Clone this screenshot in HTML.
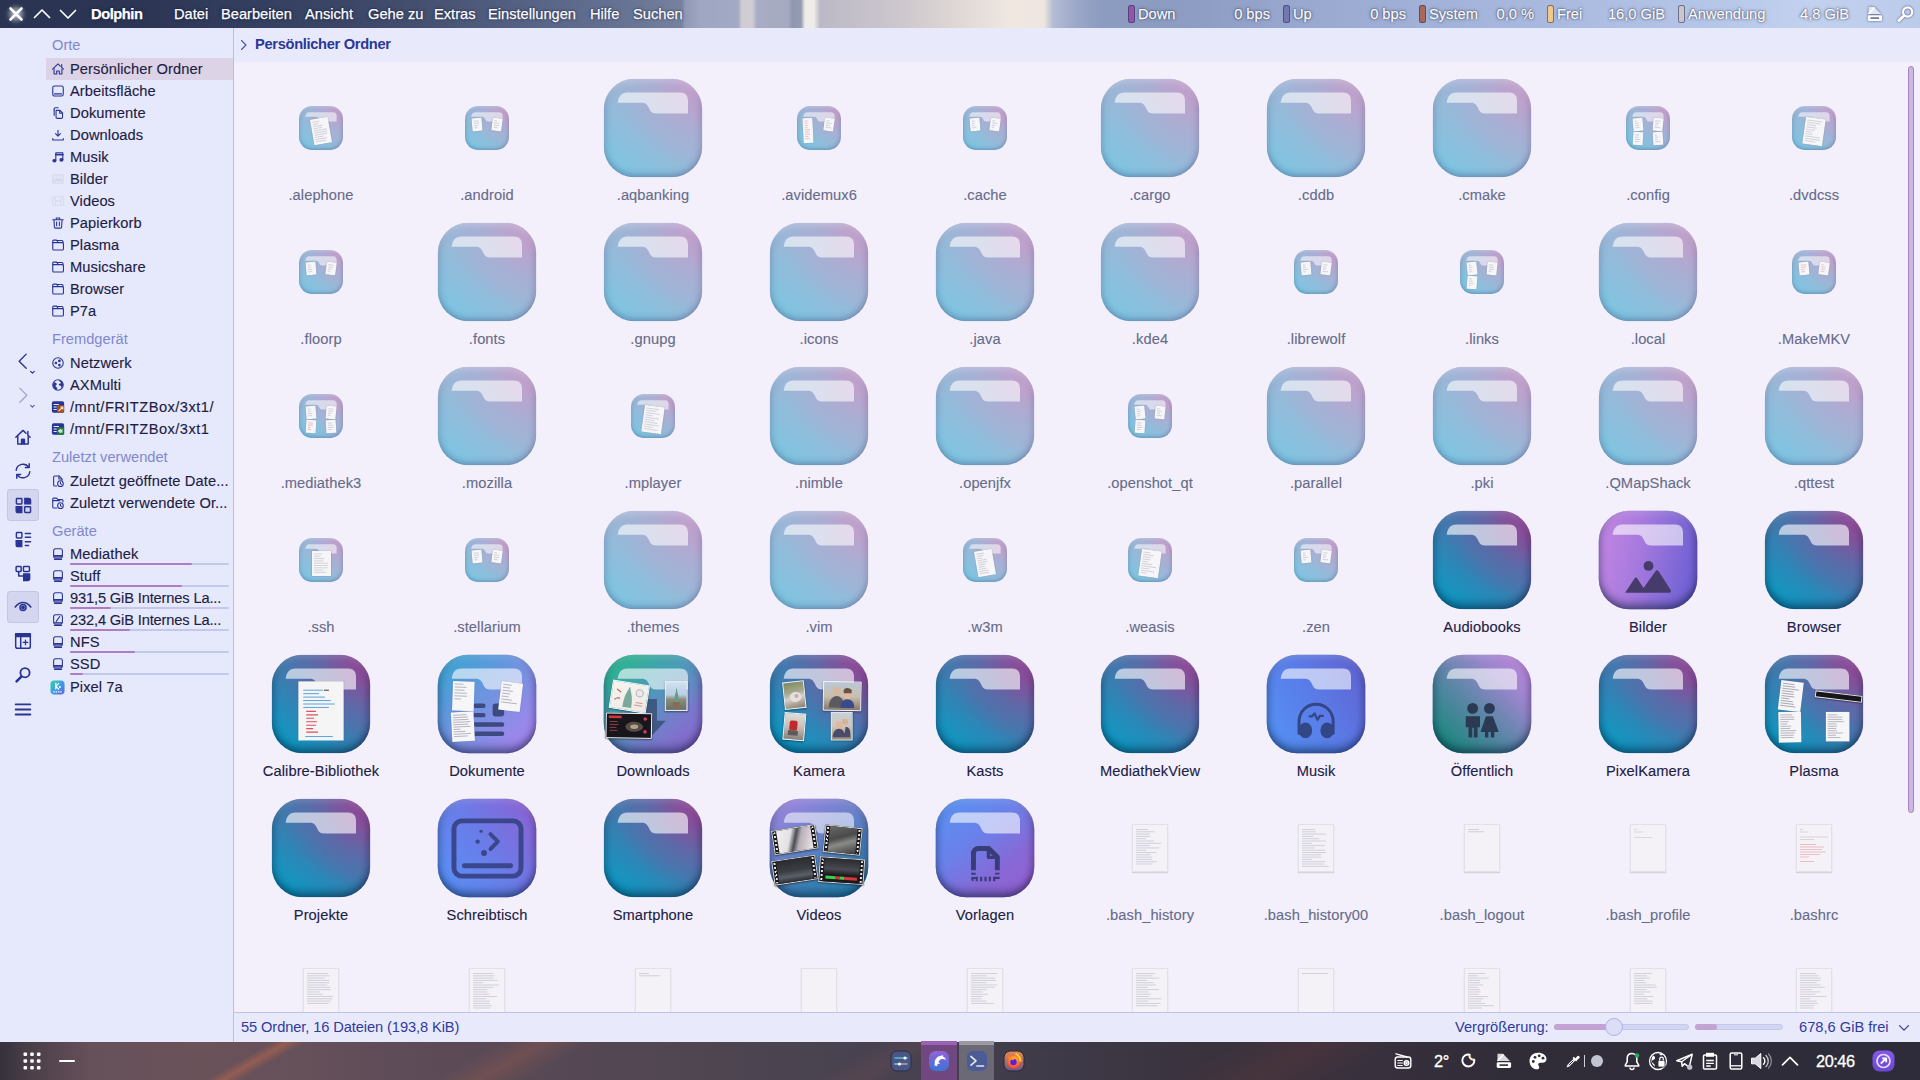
<!DOCTYPE html>
<html lang="de"><head><meta charset="utf-8"><title>Persönlicher Ordner — Dolphin</title>
<style>
*{box-sizing:border-box;margin:0;padding:0}
html,body{width:1920px;height:1080px;overflow:hidden;background:#f3f0fb}
body{font-family:"Liberation Sans",sans-serif;font-size:14.67px;color:#1c2044;position:relative;line-height:18px}
.abs,.abs>*{position:absolute}
#top{position:absolute;left:0;top:0;width:1920px;height:28px;color:#fff;
 background:linear-gradient(90deg,#2a3352 0,#2c3554 140px,#343e5e 250px,#3c4768 350px,#455070 420px,#525e80 500px,#5f6b8d 578px,#6a7694 640px,#76829f 682px,#8f98b4 685px,#9ea6c2 700px,#a4aac4 738px,#cfccd4 742px,#d2ced4 752px,#a8acc4 757px,#a6aac0 788px,#9098b0 792px,#949cb4 801px,#efebe8 805px,#efebe8 814px,#bcb9c7 820px,#cdc7cd 900px,#e0d8d6 960px,#efe7e0 1010px,#eee6e0 1044px,#b4bcd4 1053px,#9ba8c8 1076px,#8c9cc0 1100px,#8d9dc3 1200px,#98a8ce 1300px,#a6b6dc 1500px,#b5c5e7 1700px,#c1d1ee 1810px,#bccbea 1920px);
 text-shadow:0 0 1px rgba(15,22,62,.85),0 0 2px rgba(15,22,62,.7),0 0 4px rgba(20,28,70,.3);-webkit-text-stroke:.25px #fff}
#top span{position:absolute;top:5px;white-space:nowrap}
#top .r{text-align:right}
#top i{position:absolute;top:5px;width:7px;height:18px;border-radius:2.500px;border:1px solid rgba(50,55,95,.6)}
#side{position:absolute;left:0;top:28px;width:234px;height:1014px;background:#e6e8fb;border-right:1px solid #b9c0e8}
#side .hd{position:absolute;left:52px;color:#8088cf;white-space:nowrap}
#side .it{position:absolute;left:46px;width:187px;height:22px;white-space:nowrap}
#side .it span{position:absolute;left:24px;top:2px;letter-spacing:.08px;-webkit-text-stroke:.12px}
#side .it svg{position:absolute;left:5px;top:4px;width:14px;height:14px}
#side .sel{background:#dcd4e6}
#side .bar{position:absolute;left:24px;top:20px;width:159px;height:2px;background:#c3c7ec;border-radius:1px}
#side .bar b{position:absolute;left:0;top:0;height:2px;background:#b07cc6;border-radius:1px}
.tb{position:absolute;left:7px;width:32px;height:32px}
.tb.on{background:#d3d6ee;border:1px solid #c2c6e6;border-radius:3px}
.tb svg{position:absolute;left:5px;top:5px;width:22px;height:22px;overflow:visible}
.tb.on svg{left:4px;top:4px}
#loc{position:absolute;left:234px;top:28px;width:1686px;height:34px;background:#e8eafc}
#view{position:absolute;left:234px;top:62px;width:1686px;height:950px;background:#f3f0fb;overflow:hidden}
#view .in{position:absolute;left:-234px;top:-62px;width:1920px;height:1080px}
.lb{position:absolute;width:166px;text-align:center;white-space:nowrap;color:#1c2044;letter-spacing:.08px;-webkit-text-stroke:.12px}
.lb.h{color:#676b8a}
#status{position:absolute;left:234px;top:1012px;width:1686px;height:30px;background:#e8eafc;border-top:1px solid #bcc4ea;color:#2f3a9e}
#panel{position:absolute;left:0;top:1042px;width:1920px;height:38px;color:#fff;
 background:linear-gradient(150deg,rgba(190,105,75,0) 136px,rgba(190,105,75,.5) 144px,rgba(190,105,75,0) 153px,rgba(170,95,75,0) 250px,rgba(170,95,75,.28) 272px,rgba(170,95,75,0) 296px,rgba(150,90,80,0) 440px,rgba(150,90,80,.15) 462px,rgba(150,90,80,0) 480px,rgba(120,60,60,0) 620px,rgba(120,60,60,.22) 660px,rgba(120,60,60,0) 700px),linear-gradient(90deg,#36313d 0,#4a3f48 30px,#66505a 90px,#6a5259 200px,#66505a 300px,#5e4c58 400px,#584955 520px,#524753 640px,#4c4450 760px,#474150 900px,#3f3a48 1050px,#3a333e 1200px,#38303c 1380px,#302c38 1500px,#2e2c3a 1920px)}
/* folder icons */
.F{position:absolute;width:100px;height:100px;border-radius:31px;transform:scale(.986)}
.F:after{content:"";position:absolute;inset:0;border-radius:31px}
.F .tab{position:absolute;left:0;top:0;width:100px;height:100px}
.S{position:absolute;width:44px;height:44px;border-radius:13px}
.S .tab{position:absolute;left:0;top:0;width:44px;height:44px}
.fh{background:radial-gradient(circle at 96% 8%,#c4a0cc 0,rgba(192,160,204,.85) 14%,rgba(184,165,207,.4) 36%,rgba(175,170,210,0) 62%),linear-gradient(38deg,#7cc6e2 8%,#99b8d8 50%,#a8b1d4 95%);box-shadow:inset 0 -6px 7px -3px rgba(60,70,120,.35),inset 0 5px 6px -3px rgba(255,255,255,.35),inset 6px 0 7px -4px rgba(70,80,130,.25),inset -6px 0 7px -4px rgba(90,70,120,.25)}
.sh{background:radial-gradient(circle at 96% 8%,#c4a0cc 0,rgba(192,160,204,.85) 14%,rgba(184,165,207,.4) 36%,rgba(175,170,210,0) 62%),linear-gradient(38deg,#7cc6e2 8%,#99b8d8 50%,#a8b1d4 95%);box-shadow:inset 0 -3px 4px -2px rgba(60,70,120,.35),inset 0 3px 3px -2px rgba(255,255,255,.35),inset 3px 0 4px -2px rgba(70,80,130,.2),inset -3px 0 4px -2px rgba(90,70,120,.2)}
.fn{background:radial-gradient(circle at 96% 8%,#92489a 0,rgba(142,74,152,.85) 14%,rgba(125,85,158,.4) 36%,rgba(110,100,165,0) 62%),linear-gradient(38deg,#0a9cc4 8%,#3f7bb0 50%,#5a6eab 95%)}
.sd{box-shadow:inset 0 -8px 9px -3px rgba(5,25,55,.5),inset 0 5px 7px -3px rgba(255,255,255,.22),inset 6px 0 8px -4px rgba(10,30,70,.3),inset -6px 0 8px -4px rgba(40,10,60,.3)}
.pp{position:absolute;background:#f6f5f7;box-shadow:0 0 1px rgba(0,0,0,.35)}
.doc{position:absolute;width:36px;height:48px;background:#f4f2f7;border:1px solid #e2e0e9;box-shadow:0 1px 1px rgba(60,60,90,.16)}
</style></head><body>

<div id="top">
<svg style="position:absolute;left:4px;top:2px;width:24px;height:24px;overflow:visible" viewBox="0 0 24 24"><defs><filter id="glow" x="-80%" y="-80%" width="260%" height="260%"><feGaussianBlur stdDeviation="2.6"/></filter></defs><circle cx="12" cy="12" r="7" fill="#fff" opacity=".55" filter="url(#glow)"/><path d="M6.5 6.5l11 11M17.5 6.5l-11 11" stroke="#fff" stroke-width="2.6" stroke-linecap="round" fill="none"/></svg>
<svg style="position:absolute;left:30px;top:2px;width:24px;height:24px" viewBox="0 0 24 24"><path d="M4.5 15.5L12 8l7.5 7.5" stroke="#fff" stroke-width="1.7" fill="none" stroke-linecap="round" stroke-linejoin="round"/></svg>
<svg style="position:absolute;left:56px;top:2px;width:24px;height:24px" viewBox="0 0 24 24"><path d="M4.5 8.5L12 16l7.5-7.5" stroke="#fff" stroke-width="1.7" fill="none" stroke-linecap="round" stroke-linejoin="round"/></svg>
<span style="left:91px;font-weight:bold;letter-spacing:-.45px">Dolphin</span>
<span style="left:174px">Datei</span><span style="left:221px">Bearbeiten</span><span style="left:305px">Ansicht</span><span style="left:368px">Gehe zu</span><span style="left:434px">Extras</span><span style="left:488px">Einstellungen</span><span style="left:590px">Hilfe</span><span style="left:633px">Suchen</span>
<i style="left:1128px;background:#9256a8"></i><span style="left:1138px">Down</span><span class="r" style="right:650px">0 bps</span>
<i style="left:1283px;background:#7478b2"></i><span style="left:1293px">Up</span><span class="r" style="right:514px">0 bps</span>
<i style="left:1419px;background:#a9695a"></i><span style="left:1429px">System</span><span class="r" style="right:386px">0,0 %</span>
<i style="left:1547px;background:#f1c98a"></i><span style="left:1557px">Frei</span><span class="r" style="right:255px">16,0 GiB</span>
<i style="left:1678px;background:#cbc6ca"></i><span style="left:1688px">Anwendung</span><span class="r" style="right:71px">4,8 GiB</span>
<svg style="position:absolute;left:1866px;top:5px;width:18px;height:18px;filter:drop-shadow(0 0 1px rgba(20,28,70,.7))" viewBox="0 0 18 18"><path d="M2.500 1.700H8L15 9H2.500z" fill="#e4e6ee"/><path d="M2.500 9L8.500 2.500" stroke="#fff" stroke-width="1.400"/><rect x="1.700" y="10.300" width="14.400" height="5.600" rx="1.300" fill="#fff"/><path d="M4.500 13.100h8.500" stroke="#6a7698" stroke-width="1.700"/></svg>
<svg style="position:absolute;left:1896px;top:5px;width:19px;height:19px;filter:drop-shadow(0 0 1px rgba(20,28,70,.7))" viewBox="0 0 19 19"><circle cx="11.6" cy="7" r="4.6" fill="none" stroke="#fff" stroke-width="2.2"/><path d="M8 10.6l-5 5" stroke="#fff" stroke-width="2.8" stroke-linecap="round"/></svg>
</div>

<div id="side">
<div class="hd" style="top:8px">Orte</div>
<div class="it sel" style="top:30px"><svg viewBox="0 0 16 16" fill="none" stroke="#2a3494" stroke-width="1.25" stroke-linecap="round" stroke-linejoin="round"><path d="M1.8 8.2L8 2.2l2.6 2.5M12.2 3v3.2l2 2"/><path d="M3.5 7.5v6.3h3v-3.6h3v3.6h3V8"/></svg><span>Persönlicher Ordner</span></div>
<div class="it" style="top:52px"><svg viewBox="0 0 16 16" fill="none" stroke="#2a3494" stroke-width="1.25" stroke-linecap="round" stroke-linejoin="round"><rect x="2" y="2.2" width="12" height="11.6" rx="2"/><path d="M4 11.3h8"/></svg><span>Arbeitsfläche</span></div>
<div class="it" style="top:74px"><svg viewBox="0 0 16 16" fill="none" stroke="#2a3494" stroke-width="1.25" stroke-linecap="round" stroke-linejoin="round"><path d="M3.6 4.5V3.3a1.3 1.3 0 011.3-1.3h3.2"/><path d="M5.8 5h4.4l3 3v4.8a1.3 1.3 0 01-1.3 1.3H7.1a1.3 1.3 0 01-1.3-1.3z"/><path d="M3.6 4.5v6.2M9.9 5.2v3h3"/></svg><span>Dokumente</span></div>
<div class="it" style="top:96px"><svg viewBox="0 0 16 16" fill="none" stroke="#2a3494" stroke-width="1.25" stroke-linecap="round" stroke-linejoin="round"><path d="M8 2.500v6.500M5.200 6.500L8 9.300l2.800-2.800M2 12v1.800h12V12"/></svg><span>Downloads</span></div>
<div class="it" style="top:118px"><svg viewBox="0 0 16 16" fill="none" stroke="#2a3494" stroke-width="1.25" stroke-linecap="round" stroke-linejoin="round"><path d="M5.5 12V3.2h8V11"/><path d="M5.5 5.2h8" stroke-width="2"/><ellipse cx="3.9" cy="12.3" rx="1.7" ry="1.4" fill="#2a3494"/><ellipse cx="11.9" cy="11.3" rx="1.7" ry="1.4" fill="#2a3494"/></svg><span>Musik</span></div>
<div class="it" style="top:140px"><svg viewBox="0 0 16 16" fill="none" stroke="#d9dcef" stroke-width="1.5"><rect x="1.8" y="3" width="12.4" height="10" rx="1.5" fill="#e0e3f4"/><path d="M3.5 11l3-3 2 2 2-1.6 2 2.6" stroke="#cfd3ea"/></svg><span>Bilder</span></div>
<div class="it" style="top:162px"><svg viewBox="0 0 16 16" fill="none" stroke="#d9dcef" stroke-width="1.5"><rect x="1.8" y="3" width="12.4" height="10" rx="1.5"/><path d="M4.8 3v10M11.2 3v10M4.8 8h6.4"/></svg><span>Videos</span></div>
<div class="it" style="top:184px"><svg viewBox="0 0 16 16" fill="none" stroke="#2a3494" stroke-width="1.25" stroke-linecap="round" stroke-linejoin="round"><path d="M2 4.2h12M6 4V2.3h4V4M3.4 4.4l.5 8.4a1.2 1.2 0 001.2 1.1h5.800a1.2 1.2 0 001.2-1.1l.5-8.4M6.400 6.800v4.400M9.600 6.800v4.400"/></svg><span>Papierkorb</span></div>
<div class="it" style="top:206px"><svg viewBox="0 0 16 16" fill="none" stroke="#2a3494" stroke-width="1.25" stroke-linecap="round" stroke-linejoin="round"><path d="M2 5.3V3.4a1 1 0 011-1h3.3l1.5 1.7"/><path d="M2 5.3h11a1.2 1.2 0 011.2 1.2v6a1.2 1.2 0 01-1.2 1.2H3.2A1.2 1.2 0 012 12.500z"/><path d="M6.5 2.9h6a1.2 1.2 0 011.2 1.2v1.2" /></svg><span>Plasma</span></div>
<div class="it" style="top:228px"><svg viewBox="0 0 16 16" fill="none" stroke="#2a3494" stroke-width="1.25" stroke-linecap="round" stroke-linejoin="round"><path d="M2 5.3V3.4a1 1 0 011-1h3.3l1.5 1.7"/><path d="M2 5.3h11a1.2 1.2 0 011.2 1.2v6a1.2 1.2 0 01-1.2 1.2H3.2A1.2 1.2 0 012 12.500z"/><path d="M6.5 2.9h6a1.2 1.2 0 011.2 1.2v1.2" /></svg><span>Musicshare</span></div>
<div class="it" style="top:250px"><svg viewBox="0 0 16 16" fill="none" stroke="#2a3494" stroke-width="1.25" stroke-linecap="round" stroke-linejoin="round"><path d="M2 5.3V3.4a1 1 0 011-1h3.3l1.5 1.7"/><path d="M2 5.3h11a1.2 1.2 0 011.2 1.2v6a1.2 1.2 0 01-1.2 1.2H3.2A1.2 1.2 0 012 12.500z"/><path d="M6.5 2.9h6a1.2 1.2 0 011.2 1.2v1.2" /></svg><span>Browser</span></div>
<div class="it" style="top:272px"><svg viewBox="0 0 16 16" fill="none" stroke="#2a3494" stroke-width="1.25" stroke-linecap="round" stroke-linejoin="round"><path d="M2 5.3V3.4a1 1 0 011-1h3.3l1.5 1.7"/><path d="M2 5.3h11a1.2 1.2 0 011.2 1.2v6a1.2 1.2 0 01-1.2 1.2H3.2A1.2 1.2 0 012 12.500z"/><path d="M6.5 2.9h6a1.2 1.2 0 011.2 1.2v1.2" /></svg><span>P7a</span></div>
<div class="hd" style="top:302px">Fremdgerät</div>
<div class="it" style="top:324px"><svg viewBox="0 0 16 16" fill="none" stroke="#2a3494" stroke-width="1.25" stroke-linecap="round" stroke-linejoin="round"><circle cx="8" cy="8" r="6"/><circle cx="5.6" cy="8" r=".9" fill="#2a3494"/><circle cx="9.6" cy="5.6" r=".9" fill="#2a3494"/><circle cx="9.6" cy="10.4" r=".9" fill="#2a3494"/></svg><span>Netzwerk</span></div>
<div class="it" style="top:346px"><svg viewBox="0 0 16 16" fill="none" stroke="#2a3494" stroke-width="1.25" stroke-linecap="round" stroke-linejoin="round"><circle cx="8" cy="8" r="6"/><path d="M3.200 5.200c1.400-.3 2.900.2 3.300 1.300.4 1.200-.9 1.500-1.300 2.400-.3.800.6 1.300 1.300 1.800.8.600.700 1.700.300 2.800C4.500 13 2.500 11 2.300 8.300c0-1.200.3-2.200.900-3.100zM9.300 2.300c-.2.900.2 1.600 1.100 1.900.9.300 1.300 1.100.700 1.800-.600.600-1.500.300-2 1-.400.700.200 1.500 1.100 1.600 1 .100 1.600.800 1.500 1.800l-.3 1.200c1.500-1 2.400-2.700 2.300-4.500-.1-2.600-2-4.500-4.400-4.800z" fill="#2a3494" stroke="none"/></svg><span>AXMulti</span></div>
<div class="it" style="top:368px"><svg viewBox="0 0 16 16"><rect x="1" y="1.500" width="14" height="13" rx="2" fill="#2a3494"/><path d="M3 5.200h6M3 8h3.500M3 10.800h3.500" stroke="#e6e8fb" stroke-width="1.300"/><rect x="7" y="6" width="8" height="8.500" fill="#a8501c"/><path d="M8.700 12.800l4.600-4.600M10.700 8h2.800v2.800" stroke="#f6e2c4" stroke-width="1.300" fill="none"/></svg><span style="letter-spacing:.46px">/mnt/FRITZBox/3xt1/</span></div>
<div class="it" style="top:390px"><svg viewBox="0 0 16 16"><rect x="1" y="1.500" width="14" height="13" rx="2" fill="#2a3494"/><path d="M3 5.200h6M3 8h3.500M3 10.800h3.500" stroke="#e6e8fb" stroke-width="1.300"/><rect x="7" y="6" width="8" height="8.500" fill="#1c7d36"/><path d="M8.200 10.300h2v-1.900l1.600.8h1.700M8.200 10.300h2v1.900l1.600-.8h1.700M11.800 9.200v2.200" fill="#eefaee" stroke="#eefaee" stroke-width="1"/></svg><span style="letter-spacing:.46px">/mnt/FRITZBox/3xt1</span></div>
<div class="hd" style="top:420px">Zuletzt verwendet</div>
<div class="it" style="top:442px"><svg viewBox="0 0 16 16" fill="none" stroke="#2a3494" stroke-width="1.25" stroke-linecap="round" stroke-linejoin="round"><path d="M6.500 13.800H4.300A1.300 1.300 0 013 12.500v-9a1.300 1.300 0 011.300-1.300h4.900L12.600 5.600v1.400"/><path d="M9 2.400v3.400h3.400"/><circle cx="10.800" cy="11" r="3.200"/><path d="M10.800 9.500V11l1 .9" stroke-width="1.200"/></svg><span style="letter-spacing:.1px">Zuletzt geöffnete Date...</span></div>
<div class="it" style="top:464px"><svg viewBox="0 0 16 16" fill="none" stroke="#2a3494" stroke-width="1.25" stroke-linecap="round" stroke-linejoin="round"><path d="M2 5.300V3.400a1 1 0 011-1h3.300l1.500 1.700h4.700a1.200 1.200 0 011.200 1.200v1.400"/><path d="M6.500 13.700H3.200A1.200 1.200 0 012 12.500V5.300h8"/><circle cx="10.800" cy="11" r="3.200"/><path d="M10.800 9.500V11l1 .9" stroke-width="1.200"/></svg><span>Zuletzt verwendete Or...</span></div>
<div class="hd" style="top:494px">Geräte</div>
<div class="it" style="top:515px"><svg viewBox="0 0 16 16" fill="none" stroke="#2a3494" stroke-width="1.25" stroke-linecap="round" stroke-linejoin="round"><rect x="3" y="2" width="10" height="10.500" rx="2"/><path d="M3.300 9.800h9.400" /><path d="M4 14h8" stroke-width="1.600"/><path d="M3.400 10.500h9.200v1.200H3.400z" fill="#2a3494" stroke="none"/></svg><span>Mediathek</span><div class="bar"><b style="width:122px"></b></div></div>
<div class="it" style="top:537px"><svg viewBox="0 0 16 16" fill="none" stroke="#2a3494" stroke-width="1.25" stroke-linecap="round" stroke-linejoin="round"><rect x="3" y="2" width="10" height="10.500" rx="2"/><path d="M3.300 9.800h9.400" /><path d="M4 14h8" stroke-width="1.600"/><path d="M3.400 10.500h9.200v1.200H3.400z" fill="#2a3494" stroke="none"/></svg><span>Stuff</span><div class="bar"><b style="width:112px"></b></div></div>
<div class="it" style="top:559px"><svg viewBox="0 0 16 16" fill="none" stroke="#2a3494" stroke-width="1.25" stroke-linecap="round" stroke-linejoin="round"><rect x="3" y="2" width="10" height="10.500" rx="2"/><path d="M3.300 9.800h9.400" /><path d="M4 14h8" stroke-width="1.600"/><path d="M3.400 10.500h9.200v1.200H3.400z" fill="#2a3494" stroke="none"/></svg><span style="letter-spacing:-.15px">931,5 GiB Internes La...</span><div class="bar"><b style="width:41px"></b></div></div>
<div class="it" style="top:581px"><svg viewBox="0 0 16 16" fill="none" stroke="#2a3494" stroke-width="1.25" stroke-linecap="round" stroke-linejoin="round"><rect x="3" y="2" width="10" height="10.500" rx="2"/><path d="M6 9.500l4-5.500" stroke-width="1.300"/><path d="M4 14h8" stroke-width="1.600"/><path d="M3.400 10.500h9.200v1.200H3.400z" fill="#2a3494" stroke="none"/></svg><span style="letter-spacing:-.15px">232,4 GiB Internes La...</span><div class="bar"><b style="width:60px"></b></div></div>
<div class="it" style="top:603px"><svg viewBox="0 0 16 16" fill="none" stroke="#2a3494" stroke-width="1.25" stroke-linecap="round" stroke-linejoin="round"><rect x="3" y="2" width="10" height="10.500" rx="2"/><path d="M3.300 9.800h9.400" /><path d="M4 14h8" stroke-width="1.600"/><path d="M3.400 10.500h9.200v1.200H3.400z" fill="#2a3494" stroke="none"/></svg><span>NFS</span><div class="bar"><b style="width:65px"></b></div></div>
<div class="it" style="top:625px"><svg viewBox="0 0 16 16" fill="none" stroke="#2a3494" stroke-width="1.25" stroke-linecap="round" stroke-linejoin="round"><rect x="3" y="2" width="10" height="10.500" rx="2"/><path d="M3.300 9.800h9.400" /><path d="M4 14h8" stroke-width="1.600"/><path d="M3.400 10.500h9.200v1.200H3.400z" fill="#2a3494" stroke="none"/></svg><span>SSD</span><div class="bar"><b style="width:13px"></b></div></div>
<div class="it" style="top:648px"><svg viewBox="0 0 16 16" style="left:4px;top:4px;width:15px;height:15px"><defs><linearGradient id="kdg" x1="0" y1="0" x2="1" y2="1"><stop offset="0" stop-color="#3fd0a0"/><stop offset=".5" stop-color="#3aa0e8"/><stop offset="1" stop-color="#6a5ae0"/></linearGradient></defs><rect x=".5" y=".5" width="15" height="15" rx="4" fill="url(#kdg)"/><path d="M6.200 3v7M6.200 7l3.300-3.600M6.200 6.800l3.600 3.400" stroke="#fff" stroke-width="1.300" fill="none"/><circle cx="10.500" cy="7.500" r="1.100" fill="#fff"/><path d="M3.500 12.700h9" stroke="#fff" stroke-width="1.300" stroke-dasharray="1.500 1"/></svg><span>Pixel 7a</span></div>
<div class="tb " style="top:317px"><svg viewBox="0 0 24 24" fill="none" stroke="#2a3494" stroke-width="1.6" stroke-linecap="round" stroke-linejoin="round"><path d="M15.500 4.500L7.800 12.200l7.700 7.700" stroke-width="1.500"/><path d="M20.300 23.300l2 2 2-2" stroke-width="1.300"/></svg></div>
<div class="tb " style="top:351px"><svg viewBox="0 0 24 24" fill="none" stroke="#a3a7d0" stroke-width="1.6" stroke-linecap="round" stroke-linejoin="round"><path d="M8.500 4.500l7.700 7.700-7.700 7.700" stroke-width="1.500"/><path d="M20.300 23.300l2 2 2-2" stroke-width="1.300" stroke="#5a64b4"/></svg></div>
<div class="tb " style="top:393px"><svg viewBox="0 0 24 24" fill="none" stroke="#2a3494" stroke-width="1.6" stroke-linecap="round" stroke-linejoin="round"><path d="M4.200 12.300L12 4.800l3.300 3.200M17.300 6v4l2.500 2.300"/><path d="M6.300 11v8.700h4.200v-5h3v5h4.200V11.500"/><path d="M10.500 14.700h3v5h-3z" fill="#2a3494"/></svg></div>
<div class="tb " style="top:427px"><svg viewBox="0 0 24 24" fill="none" stroke="#2a3494" stroke-width="1.6" stroke-linecap="round" stroke-linejoin="round"><path d="M4.600 11.200A7.500 7.500 0 0118.200 7.800M19.400 12.800A7.500 7.500 0 015.800 16.200"/><path d="M18.800 4v4.200h-4.200M5.200 20v-4.200h4.200"/></svg></div>
<div class="tb on" style="top:461px"><svg viewBox="0 0 24 24" fill="none" stroke="#2a3494" stroke-width="1.6" stroke-linecap="round" stroke-linejoin="round"><rect x="4.800" y="4.800" width="6" height="6" rx=".8"/><path d="M13.200 4h5a2.800 2.800 0 012.800 2.800v4.600h-7.800z" fill="#2a3494" stroke="none"/><path d="M3.800 13.200h7.600V21H6.600a2.800 2.800 0 01-2.800-2.800z" fill="#2a3494" stroke="none"/><rect x="13.800" y="13.800" width="6.400" height="6.400" rx=".8"/></svg></div>
<div class="tb " style="top:495px"><svg viewBox="0 0 24 24" fill="none" stroke="#2a3494" stroke-width="1.6" stroke-linecap="round" stroke-linejoin="round"><rect x="4.800" y="4.800" width="6" height="6" rx=".8"/><path d="M3.800 13.200h7.600V21H6.600a2.800 2.800 0 01-2.800-2.800z" fill="#2a3494" stroke="none"/><path d="M14.500 6h5.700M14.500 10h5.700M14.500 15h5.700M14.500 19h3.500"/></svg></div>
<div class="tb " style="top:529px"><svg viewBox="0 0 24 24" fill="none" stroke="#2a3494" stroke-width="1.6" stroke-linecap="round" stroke-linejoin="round"><rect x="4.500" y="4.800" width="5.500" height="5.500" rx=".8"/><rect x="12.500" y="4.800" width="6.500" height="5.500" rx=".8"/><path d="M7.300 10.500v4.700h4.700"/><path d="M12 12.200h8V18a3 3 0 01-3 3h-5z" fill="#2a3494" stroke="none"/></svg></div>
<div class="tb on" style="top:563px"><svg viewBox="0 0 24 24" fill="none" stroke="#2a3494" stroke-width="1.6" stroke-linecap="round" stroke-linejoin="round"><path d="M3.500 12c2.300-3.300 5.200-5 8.500-5s6.200 1.700 8.500 5" stroke-width="1.700"/><circle cx="12" cy="12.500" r="3.300"/><circle cx="12" cy="12.500" r="1.300" fill="#2a3494"/></svg></div>
<div class="tb " style="top:597px"><svg viewBox="0 0 24 24" fill="none" stroke="#2a3494" stroke-width="1.6" stroke-linecap="round" stroke-linejoin="round"><path d="M4 4h16v3H4z" fill="#2a3494"/><rect x="4" y="4" width="16" height="16" rx="2"/><path d="M9.500 7v13"/><path d="M14.700 11v5M12.200 13.500h5" stroke-width="1.400"/></svg></div>
<div class="tb " style="top:631px"><svg viewBox="0 0 24 24" fill="none" stroke="#2a3494" stroke-width="1.6" stroke-linecap="round" stroke-linejoin="round"><circle cx="14.200" cy="9.500" r="5" stroke-width="2"/><path d="M10.200 13.700L5 19" stroke-width="2.800"/></svg></div>
<div class="tb " style="top:665px"><svg viewBox="0 0 24 24" fill="none" stroke="#2a3494" stroke-width="1.6" stroke-linecap="round" stroke-linejoin="round"><path d="M4 7h16M4 12.500h16M4 18h16" stroke-width="2"/></svg></div>
</div>
<div id="loc"><svg style="position:absolute;left:5px;top:10px;width:10px;height:14px" viewBox="0 0 10 14"><path d="M2.500 2.500L7 7l-4.500 4.500" fill="none" stroke="#4a54ac" stroke-width="1.150" stroke-linecap="round" stroke-linejoin="round"/></svg><span style="position:absolute;left:21px;top:7px;font-weight:bold;color:#2c3796;letter-spacing:-.32px;white-space:nowrap">Persönlicher Ordner</span></div>
<div id="view"><div class="in">

<div class="S sh" style="left:299px;top:106px"><svg class="tab" viewBox="0 0 100 100"><path d="M14.200 24.300C15 18 18 14 24 14H77.500C82.500 14 85.500 17 85.500 22V35.300H53C48 35.300 47 32 45.500 29 44 26 42.500 24.300 38.500 24.300Z" fill="#fff" fill-opacity="0.55"/></svg><div class="pp" style="left:12.7px;top:12.2px;width:18px;height:26px;transform:rotate(-10deg);background:#f6f5f8"><svg style="position:absolute;left:0;top:0;width:18px;height:26px" viewBox="0 0 18 26"><path d="M2 3.0h7.2M2 5.2h6.0M2 7.4h9.6M2 9.6h8.6M2 11.8h13.0M2 14.0h13.1M2 16.2h12.7M2 18.4h8.7M2 20.6h11.4M2 22.8h10.5" stroke="#c4c4cf" stroke-width="0.7"/></svg></div></div>
<div class="lb h" style="left:238px;top:186px">.alephone</div>
<div class="S sh" style="left:465px;top:106px"><svg class="tab" viewBox="0 0 100 100"><path d="M14.200 24.300C15 18 18 14 24 14H77.500C82.500 14 85.500 17 85.500 22V35.300H53C48 35.300 47 32 45.500 29 44 26 42.500 24.300 38.500 24.300Z" fill="#fff" fill-opacity="0.55"/></svg><div class="pp" style="left:6.5px;top:12px;width:10px;height:13px;transform:rotate(-5deg);background:#f6f5f8"><svg style="position:absolute;left:0;top:0;width:10px;height:13px" viewBox="0 0 10 13"><path d="M2 3.0h5.0M2 5.2h5.1M2 7.4h4.3M2 9.6h3.2" stroke="#c4c4cf" stroke-width="0.7"/></svg></div><div class="pp" style="left:27px;top:12px;width:10px;height:13px;transform:rotate(7deg);background:#f6f5f8"><svg style="position:absolute;left:0;top:0;width:10px;height:13px" viewBox="0 0 10 13"><path d="M2 3.0h2.5M2 5.2h4.7M2 7.4h5.3M2 9.6h4.0" stroke="#c4c4cf" stroke-width="0.7"/></svg></div></div>
<div class="lb h" style="left:404px;top:186px">.android</div>
<div class="F fh" style="left:603px;top:78px;"><svg class="tab" viewBox="0 0 100 100"><path d="M14.200 24.300C15 18 18 14 24 14H77.500C82.500 14 85.500 17 85.500 22V35.300H53C48 35.300 47 32 45.500 29 44 26 42.500 24.300 38.500 24.300Z" fill="#fff" fill-opacity="0.6"/></svg></div>
<div class="lb h" style="left:570px;top:186px">.aqbanking</div>
<div class="S sh" style="left:797px;top:106px"><svg class="tab" viewBox="0 0 100 100"><path d="M14.200 24.300C15 18 18 14 24 14H77.500C82.500 14 85.500 17 85.500 22V35.300H53C48 35.300 47 32 45.500 29 44 26 42.500 24.300 38.500 24.300Z" fill="#fff" fill-opacity="0.55"/></svg><div class="pp" style="left:6px;top:12px;width:10px;height:25px;transform:rotate(-3deg);background:#f6f5f8"><svg style="position:absolute;left:0;top:0;width:10px;height:25px" viewBox="0 0 10 25"><path d="M2 3.0h3.4M2 5.2h2.7M2 7.4h3.2M2 9.6h2.6M2 11.8h5.2M2 14.0h4.2M2 16.2h4.7M2 18.4h3.3M2 20.6h4.2" stroke="#e3b0b6" stroke-width="0.7"/></svg></div><div class="pp" style="left:27px;top:12px;width:10px;height:13px;transform:rotate(8deg);background:#f6f5f8"><svg style="position:absolute;left:0;top:0;width:10px;height:13px" viewBox="0 0 10 13"><path d="M2 3.0h2.9M2 5.2h5.4M2 7.4h3.9M2 9.6h5.6" stroke="#c4c4cf" stroke-width="0.7"/></svg></div></div>
<div class="lb h" style="left:736px;top:186px">.avidemux6</div>
<div class="S sh" style="left:963px;top:106px"><svg class="tab" viewBox="0 0 100 100"><path d="M14.200 24.300C15 18 18 14 24 14H77.500C82.500 14 85.500 17 85.500 22V35.300H53C48 35.300 47 32 45.500 29 44 26 42.500 24.300 38.500 24.300Z" fill="#fff" fill-opacity="0.55"/></svg><div class="pp" style="left:6.5px;top:12px;width:10px;height:13px;transform:rotate(-5deg);background:#f6f5f8"><svg style="position:absolute;left:0;top:0;width:10px;height:13px" viewBox="0 0 10 13"><path d="M2 3.0h3.3M2 5.2h2.9M2 7.4h2.2M2 9.6h3.9" stroke="#c4c4cf" stroke-width="0.7"/></svg></div><div class="pp" style="left:27px;top:12px;width:10px;height:13px;transform:rotate(7deg);background:#f6f5f8"><svg style="position:absolute;left:0;top:0;width:10px;height:13px" viewBox="0 0 10 13"><path d="M2 3.0h2.5M2 5.2h5.3M2 7.4h3.4M2 9.6h2.4" stroke="#c4c4cf" stroke-width="0.7"/></svg></div></div>
<div class="lb h" style="left:902px;top:186px">.cache</div>
<div class="F fh" style="left:1100px;top:78px;"><svg class="tab" viewBox="0 0 100 100"><path d="M14.200 24.300C15 18 18 14 24 14H77.500C82.500 14 85.500 17 85.500 22V35.300H53C48 35.300 47 32 45.500 29 44 26 42.500 24.300 38.500 24.300Z" fill="#fff" fill-opacity="0.6"/></svg></div>
<div class="lb h" style="left:1067px;top:186px">.cargo</div>
<div class="F fh" style="left:1266px;top:78px;"><svg class="tab" viewBox="0 0 100 100"><path d="M14.200 24.300C15 18 18 14 24 14H77.500C82.500 14 85.500 17 85.500 22V35.300H53C48 35.300 47 32 45.500 29 44 26 42.500 24.300 38.500 24.300Z" fill="#fff" fill-opacity="0.6"/></svg></div>
<div class="lb h" style="left:1233px;top:186px">.cddb</div>
<div class="F fh" style="left:1432px;top:78px;"><svg class="tab" viewBox="0 0 100 100"><path d="M14.200 24.300C15 18 18 14 24 14H77.500C82.500 14 85.500 17 85.500 22V35.300H53C48 35.300 47 32 45.500 29 44 26 42.500 24.300 38.500 24.300Z" fill="#fff" fill-opacity="0.6"/></svg></div>
<div class="lb h" style="left:1399px;top:186px">.cmake</div>
<div class="S sh" style="left:1626px;top:106px"><svg class="tab" viewBox="0 0 100 100"><path d="M14.200 24.300C15 18 18 14 24 14H77.500C82.500 14 85.500 17 85.500 22V35.300H53C48 35.300 47 32 45.500 29 44 26 42.500 24.300 38.500 24.300Z" fill="#fff" fill-opacity="0.55"/></svg><div class="pp" style="left:6.5px;top:11.5px;width:10px;height:13px;transform:rotate(-5deg);background:#f6f5f8"><svg style="position:absolute;left:0;top:0;width:10px;height:13px" viewBox="0 0 10 13"><path d="M2 3.0h2.2M2 5.2h3.8M2 7.4h4.0M2 9.6h4.4" stroke="#c4c4cf" stroke-width="0.7"/></svg></div><div class="pp" style="left:6.5px;top:26px;width:10px;height:13px;transform:rotate(3deg);background:#f6f5f8"><svg style="position:absolute;left:0;top:0;width:10px;height:13px" viewBox="0 0 10 13"><path d="M2 3.0h3.8M2 5.2h3.4M2 7.4h5.3M2 9.6h4.7" stroke="#c4c4cf" stroke-width="0.7"/></svg></div><div class="pp" style="left:27px;top:11.5px;width:10px;height:13px;transform:rotate(5deg);background:#f6f5f8"><svg style="position:absolute;left:0;top:0;width:10px;height:13px" viewBox="0 0 10 13"><path d="M2 3.0h5.4M2 5.2h3.7M2 7.4h2.8M2 9.6h5.2" stroke="#c4c4cf" stroke-width="0.7"/></svg></div><div class="pp" style="left:27px;top:26px;width:10px;height:13px;transform:rotate(-3deg);background:#f6f5f8"><svg style="position:absolute;left:0;top:0;width:10px;height:13px" viewBox="0 0 10 13"><path d="M2 3.0h2.1M2 5.2h3.2M2 7.4h2.3M2 9.6h5.2" stroke="#c4c4cf" stroke-width="0.7"/></svg></div></div>
<div class="lb h" style="left:1565px;top:186px">.config</div>
<div class="S sh" style="left:1792px;top:106px"><svg class="tab" viewBox="0 0 100 100"><path d="M14.200 24.300C15 18 18 14 24 14H77.500C82.500 14 85.500 17 85.500 22V35.300H53C48 35.300 47 32 45.500 29 44 26 42.500 24.300 38.500 24.300Z" fill="#fff" fill-opacity="0.55"/></svg><div class="pp" style="left:12.2px;top:11.5px;width:20px;height:27px;transform:rotate(8deg);background:#f6f5f8"><svg style="position:absolute;left:0;top:0;width:20px;height:27px" viewBox="0 0 20 27"><path d="M2 3.0h14.4M2 5.3h13.1M2 7.6h9.2M2 9.9h10.2M2 12.2h8.8M2 14.5h6.7M2 16.8h6.7M2 19.1h14.6M2 21.4h15.0M2 23.7h10.9" stroke="#c4c4cf" stroke-width="0.7"/></svg></div></div>
<div class="lb h" style="left:1731px;top:186px">.dvdcss</div>
<div class="S sh" style="left:299px;top:250px"><svg class="tab" viewBox="0 0 100 100"><path d="M14.200 24.300C15 18 18 14 24 14H77.500C82.500 14 85.500 17 85.500 22V35.300H53C48 35.300 47 32 45.500 29 44 26 42.500 24.300 38.500 24.300Z" fill="#fff" fill-opacity="0.55"/></svg><div class="pp" style="left:6.5px;top:12px;width:10px;height:13px;transform:rotate(-5deg);background:#f6f5f8"><svg style="position:absolute;left:0;top:0;width:10px;height:13px" viewBox="0 0 10 13"><path d="M2 3.0h3.1M2 5.2h2.6M2 7.4h4.1M2 9.6h3.7" stroke="#c4c4cf" stroke-width="0.7"/></svg></div><div class="pp" style="left:27px;top:12px;width:10px;height:13px;transform:rotate(7deg);background:#f6f5f8"><svg style="position:absolute;left:0;top:0;width:10px;height:13px" viewBox="0 0 10 13"><path d="M2 3.0h5.2M2 5.2h5.0M2 7.4h3.6M2 9.6h2.3" stroke="#c4c4cf" stroke-width="0.7"/></svg></div></div>
<div class="lb h" style="left:238px;top:330px">.floorp</div>
<div class="F fh" style="left:437px;top:222px;"><svg class="tab" viewBox="0 0 100 100"><path d="M14.200 24.300C15 18 18 14 24 14H77.500C82.500 14 85.500 17 85.500 22V35.300H53C48 35.300 47 32 45.500 29 44 26 42.500 24.300 38.500 24.300Z" fill="#fff" fill-opacity="0.6"/></svg></div>
<div class="lb h" style="left:404px;top:330px">.fonts</div>
<div class="F fh" style="left:603px;top:222px;"><svg class="tab" viewBox="0 0 100 100"><path d="M14.200 24.300C15 18 18 14 24 14H77.500C82.500 14 85.500 17 85.500 22V35.300H53C48 35.300 47 32 45.500 29 44 26 42.500 24.300 38.500 24.300Z" fill="#fff" fill-opacity="0.6"/></svg></div>
<div class="lb h" style="left:570px;top:330px">.gnupg</div>
<div class="F fh" style="left:769px;top:222px;"><svg class="tab" viewBox="0 0 100 100"><path d="M14.200 24.300C15 18 18 14 24 14H77.500C82.500 14 85.500 17 85.500 22V35.300H53C48 35.300 47 32 45.500 29 44 26 42.500 24.300 38.500 24.300Z" fill="#fff" fill-opacity="0.6"/></svg></div>
<div class="lb h" style="left:736px;top:330px">.icons</div>
<div class="F fh" style="left:935px;top:222px;"><svg class="tab" viewBox="0 0 100 100"><path d="M14.200 24.300C15 18 18 14 24 14H77.500C82.500 14 85.500 17 85.500 22V35.300H53C48 35.300 47 32 45.500 29 44 26 42.500 24.300 38.500 24.300Z" fill="#fff" fill-opacity="0.6"/></svg></div>
<div class="lb h" style="left:902px;top:330px">.java</div>
<div class="F fh" style="left:1100px;top:222px;"><svg class="tab" viewBox="0 0 100 100"><path d="M14.200 24.300C15 18 18 14 24 14H77.500C82.500 14 85.500 17 85.500 22V35.300H53C48 35.300 47 32 45.500 29 44 26 42.500 24.300 38.500 24.300Z" fill="#fff" fill-opacity="0.6"/></svg></div>
<div class="lb h" style="left:1067px;top:330px">.kde4</div>
<div class="S sh" style="left:1294px;top:250px"><svg class="tab" viewBox="0 0 100 100"><path d="M14.200 24.300C15 18 18 14 24 14H77.500C82.500 14 85.500 17 85.500 22V35.300H53C48 35.300 47 32 45.500 29 44 26 42.500 24.300 38.500 24.300Z" fill="#fff" fill-opacity="0.55"/></svg><div class="pp" style="left:6.5px;top:12px;width:10px;height:13px;transform:rotate(-5deg);background:#f6f5f8"><svg style="position:absolute;left:0;top:0;width:10px;height:13px" viewBox="0 0 10 13"><path d="M2 3.0h2.9M2 5.2h3.0M2 7.4h5.2M2 9.6h2.4" stroke="#c4c4cf" stroke-width="0.7"/></svg></div><div class="pp" style="left:27px;top:12px;width:10px;height:13px;transform:rotate(7deg);background:#f6f5f8"><svg style="position:absolute;left:0;top:0;width:10px;height:13px" viewBox="0 0 10 13"><path d="M2 3.0h4.3M2 5.2h3.2M2 7.4h2.7M2 9.6h5.4" stroke="#c4c4cf" stroke-width="0.7"/></svg></div></div>
<div class="lb h" style="left:1233px;top:330px">.librewolf</div>
<div class="S sh" style="left:1460px;top:250px"><svg class="tab" viewBox="0 0 100 100"><path d="M14.200 24.300C15 18 18 14 24 14H77.500C82.500 14 85.500 17 85.500 22V35.300H53C48 35.300 47 32 45.500 29 44 26 42.500 24.300 38.500 24.300Z" fill="#fff" fill-opacity="0.55"/></svg><div class="pp" style="left:6.5px;top:11.5px;width:10px;height:13px;transform:rotate(-6deg);background:#f6f5f8"><svg style="position:absolute;left:0;top:0;width:10px;height:13px" viewBox="0 0 10 13"><path d="M2 3.0h2.4M2 5.2h3.5M2 7.4h2.5M2 9.6h2.9" stroke="#c4c4cf" stroke-width="0.7"/></svg></div><div class="pp" style="left:6.5px;top:26px;width:10px;height:13px;transform:rotate(4deg);background:#f6f5f8"><svg style="position:absolute;left:0;top:0;width:10px;height:13px" viewBox="0 0 10 13"><path d="M2 3.0h2.6M2 5.2h3.4M2 7.4h4.5M2 9.6h2.3" stroke="#c4c4cf" stroke-width="0.7"/></svg></div><div class="pp" style="left:27px;top:12px;width:10px;height:13px;transform:rotate(5deg);background:#f6f5f8"><svg style="position:absolute;left:0;top:0;width:10px;height:13px" viewBox="0 0 10 13"><path d="M2 3.0h4.3M2 5.2h4.8M2 7.4h5.0M2 9.6h2.5" stroke="#c4c4cf" stroke-width="0.7"/></svg></div></div>
<div class="lb h" style="left:1399px;top:330px">.links</div>
<div class="F fh" style="left:1598px;top:222px;"><svg class="tab" viewBox="0 0 100 100"><path d="M14.200 24.300C15 18 18 14 24 14H77.500C82.500 14 85.500 17 85.500 22V35.300H53C48 35.300 47 32 45.500 29 44 26 42.500 24.300 38.500 24.300Z" fill="#fff" fill-opacity="0.6"/></svg></div>
<div class="lb h" style="left:1565px;top:330px">.local</div>
<div class="S sh" style="left:1792px;top:250px"><svg class="tab" viewBox="0 0 100 100"><path d="M14.200 24.300C15 18 18 14 24 14H77.500C82.500 14 85.500 17 85.500 22V35.300H53C48 35.300 47 32 45.500 29 44 26 42.500 24.300 38.500 24.300Z" fill="#fff" fill-opacity="0.55"/></svg><div class="pp" style="left:6.5px;top:12px;width:10px;height:13px;transform:rotate(-5deg);background:#f6f5f8"><svg style="position:absolute;left:0;top:0;width:10px;height:13px" viewBox="0 0 10 13"><path d="M2 3.0h5.4M2 5.2h4.9M2 7.4h3.4M2 9.6h3.8" stroke="#e3b0b6" stroke-width="0.7"/></svg></div><div class="pp" style="left:27px;top:12px;width:10px;height:13px;transform:rotate(7deg);background:#f6f5f8"><svg style="position:absolute;left:0;top:0;width:10px;height:13px" viewBox="0 0 10 13"><path d="M2 3.0h2.3M2 5.2h4.2M2 7.4h4.2M2 9.6h3.8" stroke="#e3b0b6" stroke-width="0.7"/></svg></div></div>
<div class="lb h" style="left:1731px;top:330px">.MakeMKV</div>
<div class="S sh" style="left:299px;top:394px"><svg class="tab" viewBox="0 0 100 100"><path d="M14.200 24.300C15 18 18 14 24 14H77.500C82.500 14 85.500 17 85.500 22V35.300H53C48 35.300 47 32 45.500 29 44 26 42.500 24.300 38.500 24.300Z" fill="#fff" fill-opacity="0.55"/></svg><div class="pp" style="left:6.5px;top:11.5px;width:10px;height:13px;transform:rotate(-5deg);background:#f6f5f8"><svg style="position:absolute;left:0;top:0;width:10px;height:13px" viewBox="0 0 10 13"><path d="M2 3.0h3.1M2 5.2h2.6M2 7.4h4.1M2 9.6h3.7" stroke="#c4c4cf" stroke-width="0.7"/></svg></div><div class="pp" style="left:6.5px;top:26px;width:10px;height:13px;transform:rotate(3deg);background:#f6f5f8"><svg style="position:absolute;left:0;top:0;width:10px;height:13px" viewBox="0 0 10 13"><path d="M2 3.0h4.7M2 5.2h4.7M2 7.4h2.6M2 9.6h3.2" stroke="#e3a0aa" stroke-width="0.7"/></svg></div><div class="pp" style="left:27px;top:11.5px;width:10px;height:13px;transform:rotate(5deg);background:#f6f5f8"><svg style="position:absolute;left:0;top:0;width:10px;height:13px" viewBox="0 0 10 13"><path d="M2 3.0h5.2M2 5.2h5.0M2 7.4h3.6M2 9.6h2.3" stroke="#c4c4cf" stroke-width="0.7"/></svg></div><div class="pp" style="left:27px;top:26px;width:10px;height:13px;transform:rotate(-3deg);background:#f6f5f8"><svg style="position:absolute;left:0;top:0;width:10px;height:13px" viewBox="0 0 10 13"><path d="M2 3.0h4.2M2 5.2h4.7M2 7.4h5.6M2 9.6h3.8" stroke="#c4c4cf" stroke-width="0.7"/></svg></div></div>
<div class="lb h" style="left:238px;top:474px">.mediathek3</div>
<div class="F fh" style="left:437px;top:366px;"><svg class="tab" viewBox="0 0 100 100"><path d="M14.200 24.300C15 18 18 14 24 14H77.500C82.500 14 85.500 17 85.500 22V35.300H53C48 35.300 47 32 45.500 29 44 26 42.500 24.300 38.500 24.300Z" fill="#fff" fill-opacity="0.6"/></svg></div>
<div class="lb h" style="left:404px;top:474px">.mozilla</div>
<div class="S sh" style="left:631px;top:394px"><svg class="tab" viewBox="0 0 100 100"><path d="M14.200 24.300C15 18 18 14 24 14H77.500C82.500 14 85.500 17 85.500 22V35.300H53C48 35.300 47 32 45.500 29 44 26 42.500 24.300 38.500 24.300Z" fill="#fff" fill-opacity="0.55"/></svg><div class="pp" style="left:12.2px;top:11.5px;width:20px;height:27px;transform:rotate(8deg);background:#f6f5f8"><svg style="position:absolute;left:0;top:0;width:20px;height:27px" viewBox="0 0 20 27"><path d="M2 3.0h12.7M2 5.3h10.3M2 7.6h14.0M2 9.9h7.2M2 12.2h13.9M2 14.5h9.8M2 16.8h12.8M2 19.1h14.7M2 21.4h9.2M2 23.7h14.2" stroke="#c4c4cf" stroke-width="0.7"/></svg></div></div>
<div class="lb h" style="left:570px;top:474px">.mplayer</div>
<div class="F fh" style="left:769px;top:366px;"><svg class="tab" viewBox="0 0 100 100"><path d="M14.200 24.300C15 18 18 14 24 14H77.500C82.500 14 85.500 17 85.500 22V35.300H53C48 35.300 47 32 45.500 29 44 26 42.500 24.300 38.500 24.300Z" fill="#fff" fill-opacity="0.6"/></svg></div>
<div class="lb h" style="left:736px;top:474px">.nimble</div>
<div class="F fh" style="left:935px;top:366px;"><svg class="tab" viewBox="0 0 100 100"><path d="M14.200 24.300C15 18 18 14 24 14H77.500C82.500 14 85.500 17 85.500 22V35.300H53C48 35.300 47 32 45.500 29 44 26 42.500 24.300 38.500 24.300Z" fill="#fff" fill-opacity="0.6"/></svg></div>
<div class="lb h" style="left:902px;top:474px">.openjfx</div>
<div class="S sh" style="left:1128px;top:394px"><svg class="tab" viewBox="0 0 100 100"><path d="M14.200 24.300C15 18 18 14 24 14H77.500C82.500 14 85.500 17 85.500 22V35.300H53C48 35.300 47 32 45.500 29 44 26 42.500 24.300 38.500 24.300Z" fill="#fff" fill-opacity="0.55"/></svg><div class="pp" style="left:6.5px;top:11.5px;width:10px;height:13px;transform:rotate(-6deg);background:#f6f5f8"><svg style="position:absolute;left:0;top:0;width:10px;height:13px" viewBox="0 0 10 13"><path d="M2 3.0h2.6M2 5.2h4.0M2 7.4h3.0M2 9.6h3.0" stroke="#c4c4cf" stroke-width="0.7"/></svg></div><div class="pp" style="left:6.5px;top:26px;width:10px;height:13px;transform:rotate(4deg);background:#f6f5f8"><svg style="position:absolute;left:0;top:0;width:10px;height:13px" viewBox="0 0 10 13"><path d="M2 3.0h4.1M2 5.2h4.3M2 7.4h5.5M2 9.6h3.9" stroke="#c4c4cf" stroke-width="0.7"/></svg></div><div class="pp" style="left:27px;top:12px;width:10px;height:13px;transform:rotate(5deg);background:#f6f5f8"><svg style="position:absolute;left:0;top:0;width:10px;height:13px" viewBox="0 0 10 13"><path d="M2 3.0h2.6M2 5.2h4.7M2 7.4h3.1M2 9.6h5.1" stroke="#c4c4cf" stroke-width="0.7"/></svg></div></div>
<div class="lb h" style="left:1067px;top:474px">.openshot_qt</div>
<div class="F fh" style="left:1266px;top:366px;"><svg class="tab" viewBox="0 0 100 100"><path d="M14.200 24.300C15 18 18 14 24 14H77.500C82.500 14 85.500 17 85.500 22V35.300H53C48 35.300 47 32 45.500 29 44 26 42.500 24.300 38.500 24.300Z" fill="#fff" fill-opacity="0.6"/></svg></div>
<div class="lb h" style="left:1233px;top:474px">.parallel</div>
<div class="F fh" style="left:1432px;top:366px;"><svg class="tab" viewBox="0 0 100 100"><path d="M14.200 24.300C15 18 18 14 24 14H77.500C82.500 14 85.500 17 85.500 22V35.300H53C48 35.300 47 32 45.500 29 44 26 42.500 24.300 38.500 24.300Z" fill="#fff" fill-opacity="0.6"/></svg></div>
<div class="lb h" style="left:1399px;top:474px">.pki</div>
<div class="F fh" style="left:1598px;top:366px;"><svg class="tab" viewBox="0 0 100 100"><path d="M14.200 24.300C15 18 18 14 24 14H77.500C82.500 14 85.500 17 85.500 22V35.300H53C48 35.300 47 32 45.500 29 44 26 42.500 24.300 38.500 24.300Z" fill="#fff" fill-opacity="0.6"/></svg></div>
<div class="lb h" style="left:1565px;top:474px">.QMapShack</div>
<div class="F fh" style="left:1764px;top:366px;"><svg class="tab" viewBox="0 0 100 100"><path d="M14.200 24.300C15 18 18 14 24 14H77.500C82.500 14 85.500 17 85.500 22V35.300H53C48 35.300 47 32 45.500 29 44 26 42.500 24.300 38.500 24.300Z" fill="#fff" fill-opacity="0.6"/></svg></div>
<div class="lb h" style="left:1731px;top:474px">.qttest</div>
<div class="S sh" style="left:299px;top:538px"><svg class="tab" viewBox="0 0 100 100"><path d="M14.200 24.300C15 18 18 14 24 14H77.500C82.500 14 85.500 17 85.500 22V35.300H53C48 35.300 47 32 45.500 29 44 26 42.500 24.300 38.500 24.300Z" fill="#fff" fill-opacity="0.55"/></svg><div class="pp" style="left:12.5px;top:13px;width:19px;height:25px;transform:rotate(0deg);background:#f6f5f8"><svg style="position:absolute;left:0;top:0;width:19px;height:25px" viewBox="0 0 19 25"><path d="M2 3.0h7.7M2 5.3h6.4M2 7.6h10.3M2 9.9h9.2M2 12.2h13.9M2 14.5h14.1M2 16.8h13.7M2 19.1h9.3M2 21.4h12.2" stroke="#c4c4cf" stroke-width="0.7"/></svg></div></div>
<div class="lb h" style="left:238px;top:618px">.ssh</div>
<div class="S sh" style="left:465px;top:538px"><svg class="tab" viewBox="0 0 100 100"><path d="M14.200 24.300C15 18 18 14 24 14H77.500C82.500 14 85.500 17 85.500 22V35.300H53C48 35.300 47 32 45.500 29 44 26 42.500 24.300 38.500 24.300Z" fill="#fff" fill-opacity="0.55"/></svg><div class="pp" style="left:6.5px;top:12px;width:10px;height:13px;transform:rotate(-5deg);background:#f6f5f8"><svg style="position:absolute;left:0;top:0;width:10px;height:13px" viewBox="0 0 10 13"><path d="M2 3.0h5.0M2 5.2h5.1M2 7.4h4.3M2 9.6h3.2" stroke="#c4c4cf" stroke-width="0.7"/></svg></div><div class="pp" style="left:27px;top:12px;width:10px;height:13px;transform:rotate(7deg);background:#f6f5f8"><svg style="position:absolute;left:0;top:0;width:10px;height:13px" viewBox="0 0 10 13"><path d="M2 3.0h2.5M2 5.2h4.7M2 7.4h5.3M2 9.6h4.0" stroke="#c4c4cf" stroke-width="0.7"/></svg></div></div>
<div class="lb h" style="left:404px;top:618px">.stellarium</div>
<div class="F fh" style="left:603px;top:510px;"><svg class="tab" viewBox="0 0 100 100"><path d="M14.200 24.300C15 18 18 14 24 14H77.500C82.500 14 85.500 17 85.500 22V35.300H53C48 35.300 47 32 45.500 29 44 26 42.500 24.300 38.500 24.300Z" fill="#fff" fill-opacity="0.6"/></svg></div>
<div class="lb h" style="left:570px;top:618px">.themes</div>
<div class="F fh" style="left:769px;top:510px;"><svg class="tab" viewBox="0 0 100 100"><path d="M14.200 24.300C15 18 18 14 24 14H77.500C82.500 14 85.500 17 85.500 22V35.300H53C48 35.300 47 32 45.500 29 44 26 42.500 24.300 38.500 24.300Z" fill="#fff" fill-opacity="0.6"/></svg></div>
<div class="lb h" style="left:736px;top:618px">.vim</div>
<div class="S sh" style="left:963px;top:538px"><svg class="tab" viewBox="0 0 100 100"><path d="M14.200 24.300C15 18 18 14 24 14H77.500C82.500 14 85.500 17 85.500 22V35.300H53C48 35.300 47 32 45.500 29 44 26 42.500 24.300 38.500 24.300Z" fill="#fff" fill-opacity="0.55"/></svg><div class="pp" style="left:12.7px;top:12.2px;width:18px;height:26px;transform:rotate(-10deg);background:#f6f5f8"><svg style="position:absolute;left:0;top:0;width:18px;height:26px" viewBox="0 0 18 26"><path d="M2 3.0h7.7M2 5.2h6.7M2 7.4h5.1M2 9.6h9.1M2 11.8h9.8M2 14.0h7.4M2 16.2h6.2M2 18.4h7.4M2 20.6h9.1M2 22.8h9.5" stroke="#c4c4cf" stroke-width="0.7"/></svg></div></div>
<div class="lb h" style="left:902px;top:618px">.w3m</div>
<div class="S sh" style="left:1128px;top:538px"><svg class="tab" viewBox="0 0 100 100"><path d="M14.200 24.300C15 18 18 14 24 14H77.500C82.500 14 85.500 17 85.500 22V35.300H53C48 35.300 47 32 45.500 29 44 26 42.500 24.300 38.500 24.300Z" fill="#fff" fill-opacity="0.55"/></svg><div class="pp" style="left:12.2px;top:11.5px;width:20px;height:27px;transform:rotate(8deg);background:#f6f5f8"><svg style="position:absolute;left:0;top:0;width:20px;height:27px" viewBox="0 0 20 27"><path d="M2 3.0h6.9M2 5.3h10.7M2 7.6h7.9M2 9.9h7.9M2 12.2h5.7M2 14.5h10.2M2 16.8h14.5M2 19.1h8.0M2 21.4h13.4M2 23.7h5.8" stroke="#c4c4cf" stroke-width="0.7"/></svg></div></div>
<div class="lb h" style="left:1067px;top:618px">.weasis</div>
<div class="S sh" style="left:1294px;top:538px"><svg class="tab" viewBox="0 0 100 100"><path d="M14.200 24.300C15 18 18 14 24 14H77.500C82.500 14 85.500 17 85.500 22V35.300H53C48 35.300 47 32 45.500 29 44 26 42.500 24.300 38.500 24.300Z" fill="#fff" fill-opacity="0.55"/></svg><div class="pp" style="left:6.5px;top:12px;width:10px;height:13px;transform:rotate(-5deg);background:#f6f5f8"><svg style="position:absolute;left:0;top:0;width:10px;height:13px" viewBox="0 0 10 13"><path d="M2 3.0h2.9M2 5.2h3.0M2 7.4h5.2M2 9.6h2.4" stroke="#c4c4cf" stroke-width="0.7"/></svg></div><div class="pp" style="left:27px;top:12px;width:10px;height:13px;transform:rotate(7deg);background:#f6f5f8"><svg style="position:absolute;left:0;top:0;width:10px;height:13px" viewBox="0 0 10 13"><path d="M2 3.0h4.3M2 5.2h3.2M2 7.4h2.7M2 9.6h5.4" stroke="#c4c4cf" stroke-width="0.7"/></svg></div></div>
<div class="lb h" style="left:1233px;top:618px">.zen</div>
<div class="F fn sd" style="left:1432px;top:510px;"><svg class="tab" viewBox="0 0 100 100"><path d="M14.200 24.300C15 18 18 14 24 14H77.500C82.500 14 85.500 17 85.500 22V35.300H53C48 35.300 47 32 45.500 29 44 26 42.500 24.300 38.500 24.300Z" fill="#fff" fill-opacity="0.62"/></svg></div>
<div class="lb" style="left:1399px;top:618px">Audiobooks</div>
<div class="F sd" style="left:1598px;top:510px;background:linear-gradient(100deg,#c487e2 0%,#a77adf 40%,#6b5fd2 95%)"><svg class="tab" viewBox="0 0 100 100"><path d="M14.200 24.300C15 18 18 14 24 14H77.500C82.500 14 85.500 17 85.500 22V35.300H53C48 35.300 47 32 45.500 29 44 26 42.500 24.300 38.500 24.300Z" fill="#fff" fill-opacity="0.6"/></svg><svg class="tab" viewBox="0 0 100 100"><path d="M27 83L36.500 68.500a1.500 1.500 0 012.500 0L45.500 78.500 58 61a1.500 1.500 0 012.500 0L73 80.500a1.700 1.700 0 01-1.400 2.700H28.200A1.500 1.500 0 0127 83z" fill="#463b6a"/><circle cx="50.500" cy="56" r="5" fill="#463b6a"/></svg></div>
<div class="lb" style="left:1565px;top:618px">Bilder</div>
<div class="F fn sd" style="left:1764px;top:510px;"><svg class="tab" viewBox="0 0 100 100"><path d="M14.200 24.300C15 18 18 14 24 14H77.500C82.500 14 85.500 17 85.500 22V35.300H53C48 35.300 47 32 45.500 29 44 26 42.500 24.300 38.500 24.300Z" fill="#fff" fill-opacity="0.62"/></svg></div>
<div class="lb" style="left:1731px;top:618px">Browser</div>
<div class="F fn sd" style="left:271px;top:654px;"><svg class="tab" viewBox="0 0 100 100"><path d="M14.200 24.300C15 18 18 14 24 14H77.500C82.500 14 85.500 17 85.500 22V35.300H53C48 35.300 47 32 45.500 29 44 26 42.500 24.300 38.500 24.300Z" fill="#fff" fill-opacity="0.62"/></svg><div class="pp" style="left:26.700px;top:26.900px;width:46px;height:60.500px;background:#f5f5f6"><svg style="position:absolute;left:0;top:-1px;width:45px;height:62px" viewBox="0 0 45 62"><path d="M5 10h20M5 13.500h16M5 17h22M5 20.500h28M5 24h32M5 27.500h26" stroke="#5aa2d8" stroke-width="1"/><path d="M8 31.500h10M8 35h12M8 38.500h8M8 42h11M8 45.500h10M8 49h7M8 52.500h12" stroke="#e0505a" stroke-width="1.100"/><path d="M7 57h28" stroke="#5aa2d8" stroke-width="1"/><path d="M26 10h5" stroke="#333" stroke-width="1"/></svg></div></div>
<div class="lb" style="left:238px;top:762px">Calibre-Bibliothek</div>
<div class="F sd" style="left:437px;top:654px;background:linear-gradient(135deg,#38a4d2 5%,#6e94e0 45%,#a884ee 92%)"><svg class="tab" viewBox="0 0 100 100"><path d="M14.200 24.300C15 18 18 14 24 14H77.500C82.500 14 85.500 17 85.500 22V35.300H53C48 35.300 47 32 45.500 29 44 26 42.500 24.300 38.500 24.300Z" fill="#fff" fill-opacity="0.6"/></svg><svg class="tab" viewBox="0 0 100 100" fill="none" stroke="#3c4a80" stroke-width="4.500" stroke-linecap="round"><path d="M38.300 51.800h8M38.300 61.300h8M38.300 70.700h27M38.300 80.200h27"/><rect x="56.700" y="50.600" width="9.700" height="11" rx="2" fill="#3c4a80" stroke-width="2"/></svg><div class="pp" style="left:15px;top:26.5px;width:21.5px;height:29.5px;transform:rotate(2deg);background:#f6f5f8"><svg style="position:absolute;left:0;top:0;width:21.5px;height:29.5px" viewBox="0 0 21.5 29.5"><path d="M2 3.0h8.6M2 6.0h11.8M2 9.0h10.0M2 12.0h12.5M2 15.0h12.7M2 18.0h6.8" stroke="#9a9aa8" stroke-width="0.7"/></svg></div><div class="pp" style="left:62.5px;top:27.5px;width:22px;height:29px;transform:rotate(7deg);background:#f6f5f8"><svg style="position:absolute;left:0;top:0;width:22px;height:29px" viewBox="0 0 22 29"><path d="M2 3.0h8.8M2 6.0h7.4M2 9.0h10.6M2 12.0h8.0M2 15.0h7.0M2 18.0h10.6M2 21.0h16.2" stroke="#9a9aa8" stroke-width="0.7"/></svg></div><div class="pp" style="left:13.5px;top:57.5px;width:23px;height:29.5px;transform:rotate(-3deg);background:#f6f5f8"><svg style="position:absolute;left:0;top:0;width:23px;height:29.5px" viewBox="0 0 23 29.5"><path d="M2 3.0h13.8M2 5.4h15.1M2 7.8h15.7M2 10.2h17.4M2 12.6h15.1M2 15.0h17.2M2 17.4h7.0M2 19.8h12.0M2 22.2h17.4M2 24.6h14.0" stroke="#9a9aa8" stroke-width="0.7"/></svg></div></div>
<div class="lb" style="left:404px;top:762px">Dokumente</div>
<div class="F sd" style="left:603px;top:654px;background:linear-gradient(140deg,#27b88a 5%,#4a9cb8 40%,#7a78cc 72%,#8e60cc 98%)"><svg class="tab" viewBox="0 0 100 100"><path d="M14.200 24.300C15 18 18 14 24 14H77.500C82.500 14 85.500 17 85.500 22V35.300H53C48 35.300 47 32 45.500 29 44 26 42.500 24.300 38.500 24.300Z" fill="#fff" fill-opacity="0.6"/></svg><svg class="tab" viewBox="0 0 100 100"><path d="M42 45h12v22h9L48 83 33 67h9z" fill="#3a5078" fill-opacity=".85"/></svg><div style="position:absolute;left:6.7px;top:27.5px;width:38px;height:29px;transform:rotate(9deg);background:linear-gradient(160deg,#f6f4f0,#eceae4);border:1px solid #f4f4f4;box-shadow:0 1px 2px rgba(0,0,0,.45)"><svg style="position:absolute;left:0;top:0" width="36" height="27" viewBox="0 0 40 29"><path d="M14 27c0-8 1-14 3-18l2-6 2 6c2 4 3 10 3 18z" fill="#7aa89a"/><circle cx="31" cy="9" r="4" fill="#e8e8ee" stroke="#888" stroke-width=".6"/><path d="M4 20c2-2 4-3 6-2M5 8l5 3" stroke="#c44" stroke-width="1.200" fill="none"/><path d="M28 20h8M27 23h9" stroke="#d88" stroke-width="1"/></svg></div><div style="position:absolute;left:61.6px;top:27px;width:23.7px;height:29.7px;transform:rotate(0deg);background:linear-gradient(180deg,#cfe0f0 0,#b9cfe6 45%,#8a8f7a 62%,#6a6f62 100%);border:1px solid #f4f4f4;box-shadow:0 1px 2px rgba(0,0,0,.45)"><svg style="position:absolute;left:0;top:0" width="21" height="27" viewBox="0 0 21 27"><path d="M8.500 22c0-5 .5-9 1.500-12l1-5 .8 5c1 3 1.500 7 1.500 12z" fill="#6a9a8a"/><rect x="7" y="20" width="7" height="5" fill="#8a6a50"/></svg></div><div style="position:absolute;left:2.3px;top:59px;width:47px;height:26px;transform:rotate(1deg);background:#18161c;border:1px solid #f4f4f4;box-shadow:0 1px 2px rgba(0,0,0,.45)"><svg style="position:absolute;left:0;top:0" width="44" height="24" viewBox="0 0 44 24"><rect x="2" y="2" width="13" height="2.500" fill="#d03a3a"/><ellipse cx="28" cy="13" rx="9" ry="5" fill="#6a5a50" opacity=".8"/><ellipse cx="28" cy="13" rx="4" ry="2.200" fill="#c8b8a0" opacity=".8"/><path d="M3 8h8M3 11h9M3 14h7M3 17h8" stroke="#b04a4a" stroke-width=".8"/><circle cx="39" cy="5" r="1.800" fill="#d03a5a"/><circle cx="39" cy="18" r="1.800" fill="#d03a5a"/></svg></div></div>
<div class="lb" style="left:570px;top:762px">Downloads</div>
<div class="F fn sd" style="left:769px;top:654px;"><svg class="tab" viewBox="0 0 100 100"><path d="M14.200 24.300C15 18 18 14 24 14H77.500C82.500 14 85.500 17 85.500 22V35.300H53C48 35.300 47 32 45.500 29 44 26 42.500 24.300 38.500 24.300Z" fill="#fff" fill-opacity="0.62"/></svg><div style="position:absolute;left:14.4px;top:27px;width:22px;height:28px;transform:rotate(-6deg);background:linear-gradient(170deg,#7a8a5a 0,#a8a890 40%,#d8d0c8 60%,#8a7a6a 100%);border:1px solid #f4f4f4;box-shadow:0 1px 2px rgba(0,0,0,.45)"><svg style="position:absolute;left:0;top:0" width="20" height="27" viewBox="0 0 20 27"><ellipse cx="11" cy="15" rx="6" ry="5" fill="#e6e0dc"/><circle cx="12" cy="14" r="2" fill="#c8a8a0"/></svg></div><div style="position:absolute;left:54px;top:27px;width:39px;height:29.5px;transform:rotate(1deg);background:linear-gradient(180deg,#b8c8d8 0,#c8c0b0 50%,#8a7a68 100%);border:1px solid #f4f4f4;box-shadow:0 1px 2px rgba(0,0,0,.45)"><svg style="position:absolute;left:0;top:0" width="36" height="26" viewBox="0 0 36 26"><circle cx="13" cy="9" r="4.500" fill="#d8b8a0"/><path d="M5 26c0-8 4-12 8-12s8 4 8 12z" fill="#5a5a62"/><circle cx="24" cy="13" r="4" fill="#e0b8a0"/><path d="M17 26c0-6 3-9 7-9s7 3 7 9z" fill="#3a4a8a"/><path d="M20 8c1-3 6-3 8 0v3h-8z" fill="#6a5040"/></svg></div><div style="position:absolute;left:14.2px;top:58.6px;width:22px;height:28px;transform:rotate(5deg);background:linear-gradient(180deg,#e0dcd8 0,#c8c0b8 50%,#8a8078 100%);border:1px solid #f4f4f4;box-shadow:0 1px 2px rgba(0,0,0,.45)"><svg style="position:absolute;left:0;top:0" width="18" height="26" viewBox="0 0 18 26"><rect x="5" y="7" width="8" height="10" rx="2" fill="#c02a2a"/><rect x="4" y="17" width="10" height="5" fill="#5a5a5a"/></svg></div><div style="position:absolute;left:61.6px;top:58px;width:22.7px;height:29px;transform:rotate(0deg);background:linear-gradient(180deg,#c8d0d8 0,#d0c8b8 50%,#9a8a78 100%);border:1px solid #f4f4f4;box-shadow:0 1px 2px rgba(0,0,0,.45)"><svg style="position:absolute;left:0;top:0" width="19" height="25" viewBox="0 0 19 25"><circle cx="7" cy="12" r="3.500" fill="#e0b8a0"/><circle cx="13.500" cy="9" r="3" fill="#d8b098"/><path d="M1 25c0-6 3-9 6-9s5 2 6 5l1-7c3 0 5 3 5 8v3z" fill="#4a4a6a"/></svg></div></div>
<div class="lb" style="left:736px;top:762px">Kamera</div>
<div class="F fn sd" style="left:935px;top:654px;"><svg class="tab" viewBox="0 0 100 100"><path d="M14.200 24.300C15 18 18 14 24 14H77.500C82.500 14 85.500 17 85.500 22V35.300H53C48 35.300 47 32 45.500 29 44 26 42.500 24.300 38.500 24.300Z" fill="#fff" fill-opacity="0.62"/></svg></div>
<div class="lb" style="left:902px;top:762px">Kasts</div>
<div class="F fn sd" style="left:1100px;top:654px;"><svg class="tab" viewBox="0 0 100 100"><path d="M14.200 24.300C15 18 18 14 24 14H77.500C82.500 14 85.500 17 85.500 22V35.300H53C48 35.300 47 32 45.500 29 44 26 42.500 24.300 38.500 24.300Z" fill="#fff" fill-opacity="0.62"/></svg></div>
<div class="lb" style="left:1067px;top:762px">MediathekView</div>
<div class="F sd" style="left:1266px;top:654px;background:linear-gradient(60deg,#5590f3 10%,#5a7ce8 50%,#5f64d2 92%)"><svg class="tab" viewBox="0 0 100 100"><path d="M14.200 24.300C15 18 18 14 24 14H77.500C82.500 14 85.500 17 85.500 22V35.300H53C48 35.300 47 32 45.500 29 44 26 42.500 24.300 38.500 24.300Z" fill="#fff" fill-opacity="0.6"/></svg><svg class="tab" viewBox="0 0 100 100" fill="none" stroke="#2c3a70" stroke-width="3" stroke-linecap="round" stroke-linejoin="round" opacity=".82"><path d="M32.800 80V67.500a17.300 17.300 0 0134.600 0V80"/><ellipse cx="39.300" cy="76.800" rx="6.800" ry="8" fill="#2c3a70" stroke="none"/><ellipse cx="61.300" cy="76.800" rx="6.800" ry="8" fill="#2c3a70" stroke="none"/><path d="M43.500 62.500h2.500l2.500-3 3 6.500 2.500-4h3" stroke-width="2.300"/></svg></div>
<div class="lb" style="left:1233px;top:762px">Musik</div>
<div class="F sd" style="left:1432px;top:654px;background:linear-gradient(45deg,#17877a 8%,#5d86a8 45%,#9f86cf 75%,#c084dc 98%)"><svg class="tab" viewBox="0 0 100 100"><path d="M14.200 24.300C15 18 18 14 24 14H77.500C82.500 14 85.500 17 85.500 22V35.300H53C48 35.300 47 32 45.500 29 44 26 42.500 24.300 38.500 24.300Z" fill="#fff" fill-opacity="0.6"/></svg><svg class="tab" viewBox="0 0 100 100" fill="#2b3a52"><circle cx="40.500" cy="54.500" r="5.500"/><circle cx="57.500" cy="54.500" r="5.500"/><path d="M33.500 62.500h14.500v11h-2.500v10.500h-3.800V74h-1.600v10h-3.800V73.500h-2.800z"/><path d="M54 62.500h7l6 16h-4.500v5.500h-3.500v-5.500h-2.500v5.500h-3.500v-5.500H48.500z"/></svg></div>
<div class="lb" style="left:1399px;top:762px">Öffentlich</div>
<div class="F fn sd" style="left:1598px;top:654px;"><svg class="tab" viewBox="0 0 100 100"><path d="M14.200 24.300C15 18 18 14 24 14H77.500C82.500 14 85.500 17 85.500 22V35.300H53C48 35.300 47 32 45.500 29 44 26 42.500 24.300 38.500 24.300Z" fill="#fff" fill-opacity="0.62"/></svg></div>
<div class="lb" style="left:1565px;top:762px">PixelKamera</div>
<div class="F fn sd" style="left:1764px;top:654px;"><svg class="tab" viewBox="0 0 100 100"><path d="M14.200 24.300C15 18 18 14 24 14H77.500C82.500 14 85.500 17 85.500 22V35.300H53C48 35.300 47 32 45.500 29 44 26 42.500 24.300 38.500 24.300Z" fill="#fff" fill-opacity="0.62"/></svg><div class="pp" style="left:14.9px;top:26.9px;width:22.7px;height:29.5px;transform:rotate(7deg);background:#f6f5f8"><svg style="position:absolute;left:0;top:0;width:22.7px;height:29.5px" viewBox="0 0 22.7 29.5"><path d="M2 3.0h11.6M2 5.5h12.8M2 8.0h16.9M2 10.5h11.8M2 13.0h12.2M2 15.5h13.1M2 18.0h8.6M2 20.5h12.3M2 23.0h13.6M2 25.5h15.4" stroke="#8a8a98" stroke-width="0.7"/></svg></div><div class="pp" style="left:14.3px;top:57.5px;width:23px;height:30.5px;transform:rotate(-1deg);background:#f6f5f8"><svg style="position:absolute;left:0;top:0;width:23px;height:30.5px" viewBox="0 0 23 30.5"><path d="M2 3.0h12.1M2 5.3h14.1M2 7.6h14.2M2 9.9h8.3M2 12.2h6.8M2 14.5h10.9M2 16.8h9.8M2 19.1h15.9M2 21.4h14.5M2 23.7h13.5M2 26.0h13.0" stroke="#9a9aa8" stroke-width="0.7"/></svg></div><div class="pp" style="left:62.4px;top:57.5px;width:23.3px;height:30px;transform:rotate(0deg);background:#f6f5f8"><svg style="position:absolute;left:0;top:0;width:23.3px;height:30px" viewBox="0 0 23.3 30"><path d="M2 3.0h9.8M2 5.3h14.7M2 7.6h14.7M2 9.9h16.6M2 12.2h8.9M2 14.5h9.4M2 16.8h8.5M2 19.1h9.4M2 21.4h15.3M2 23.7h8.3M2 26.0h12.9" stroke="#9a9aa8" stroke-width="0.7"/></svg></div><div style="position:absolute;left:50.500px;top:39.200px;width:48.300px;height:7px;background:#15151a;border:1px solid #e8e8ea;transform:rotate(6.800deg);box-shadow:0 1px 1px rgba(0,0,0,.4)"></div></div>
<div class="lb" style="left:1731px;top:762px">Plasma</div>
<div class="F fn sd" style="left:271px;top:798px;"><svg class="tab" viewBox="0 0 100 100"><path d="M14.200 24.300C15 18 18 14 24 14H77.500C82.500 14 85.500 17 85.500 22V35.300H53C48 35.300 47 32 45.500 29 44 26 42.500 24.300 38.500 24.300Z" fill="#fff" fill-opacity="0.62"/></svg></div>
<div class="lb" style="left:238px;top:906px">Projekte</div>
<div class="F sd" style="left:437px;top:798px;background:linear-gradient(55deg,#5990f6 8%,#6a7ce8 50%,#8b62d4 95%)"><svg class="tab" viewBox="0 0 100 100" fill="none" stroke="#3a478c" stroke-width="5" stroke-linecap="round" stroke-linejoin="round"><rect x="16.500" y="22.500" width="68" height="56" rx="8"/><path d="M27 68h47"/><path d="M53.500 36l7.500 7.500-7.500 7.500" stroke-width="4"/><circle cx="47" cy="55" r="3" fill="#3a478c" stroke="none"/><circle cx="40.500" cy="43.500" r="2.200" fill="#3a478c" stroke="none"/><circle cx="44" cy="33" r="1.600" fill="#3a478c" stroke="none"/></svg></div>
<div class="lb" style="left:404px;top:906px">Schreibtisch</div>
<div class="F fn sd" style="left:603px;top:798px;"><svg class="tab" viewBox="0 0 100 100"><path d="M14.200 24.300C15 18 18 14 24 14H77.500C82.500 14 85.500 17 85.500 22V35.300H53C48 35.300 47 32 45.500 29 44 26 42.500 24.300 38.500 24.300Z" fill="#fff" fill-opacity="0.62"/></svg></div>
<div class="lb" style="left:570px;top:906px">Smartphone</div>
<div class="F sd" style="left:769px;top:798px;background:linear-gradient(150deg,#9d86de 5%,#6a82cc 40%,#3a80b4 70%,#1f7fae 98%)"><svg class="tab" viewBox="0 0 100 100"><path d="M14.200 24.300C15 18 18 14 24 14H77.500C82.500 14 85.500 17 85.500 22V35.300H53C48 35.300 47 32 45.500 29 44 26 42.500 24.300 38.500 24.300Z" fill="#fff" fill-opacity="0.55"/></svg><div style="position:absolute;left:3px;top:29.3px;width:45.3px;height:25px;transform:rotate(-9deg);background:#1a1a1e;box-shadow:0 1px 2px rgba(0,0,0,.5);border:1px solid #d8d8dc"><div style="position:absolute;left:4px;right:4px;top:0;bottom:0;background:linear-gradient(110deg,#f2f0ee 0,#e4e0e4 36%,#4a4c54 50%,#b8aeb6 62%,#eee8ea 100%)"></div><div style="position:absolute;left:1px;top:1px;bottom:1px;width:2px;background:repeating-linear-gradient(180deg,#e8e8ea 0 2px,#1a1a1e 2px 4px)"></div><div style="position:absolute;right:1px;top:1px;bottom:1px;width:2px;background:repeating-linear-gradient(180deg,#e8e8ea 0 2px,#1a1a1e 2px 4px)"></div></div><div style="position:absolute;left:54.7px;top:27.6px;width:37.7px;height:28.4px;transform:rotate(6deg);background:#1a1a1e;box-shadow:0 1px 2px rgba(0,0,0,.5);border:1px solid #d8d8dc"><div style="position:absolute;left:4px;right:4px;top:0;bottom:0;background:linear-gradient(160deg,#6a6a6a 0,#4a4a4a 40%,#8a8a88 60%,#3a3a3a 100%)"></div><div style="position:absolute;left:1px;top:1px;bottom:1px;width:2px;background:repeating-linear-gradient(180deg,#e8e8ea 0 2px,#1a1a1e 2px 4px)"></div><div style="position:absolute;right:1px;top:1px;bottom:1px;width:2px;background:repeating-linear-gradient(180deg,#e8e8ea 0 2px,#1a1a1e 2px 4px)"></div></div><div style="position:absolute;left:2.5px;top:59.6px;width:45.2px;height:24.6px;transform:rotate(-8.5deg);background:#1a1a1e;box-shadow:0 1px 2px rgba(0,0,0,.5);border:1px solid #d8d8dc"><div style="position:absolute;left:4px;right:4px;top:0;bottom:0;background:linear-gradient(180deg,#2a2c30 0,#3a3e44 50%,#5a6068 75%,#2a2c30 100%)"></div><div style="position:absolute;left:1px;top:1px;bottom:1px;width:2px;background:repeating-linear-gradient(180deg,#e8e8ea 0 2px,#1a1a1e 2px 4px)"></div><div style="position:absolute;right:1px;top:1px;bottom:1px;width:2px;background:repeating-linear-gradient(180deg,#e8e8ea 0 2px,#1a1a1e 2px 4px)"></div></div><div style="position:absolute;left:50.3px;top:59.6px;width:46.1px;height:26.4px;transform:rotate(4deg);background:#1a1a1e;box-shadow:0 1px 2px rgba(0,0,0,.5);border:1px solid #d8d8dc"><div style="position:absolute;left:4px;right:4px;top:0;bottom:0;background:linear-gradient(180deg,#2a2a30 0,#4a4a52 45%,#1a1a1e 70%)"></div><div style="position:absolute;left:1px;top:1px;bottom:1px;width:2px;background:repeating-linear-gradient(180deg,#e8e8ea 0 2px,#1a1a1e 2px 4px)"></div><div style="position:absolute;right:1px;top:1px;bottom:1px;width:2px;background:repeating-linear-gradient(180deg,#e8e8ea 0 2px,#1a1a1e 2px 4px)"></div><div style="position:absolute;left:6px;right:6px;bottom:3px;height:3px;background:linear-gradient(90deg,#3ad04a 0 30%,#d03a3a 30% 45%,#3ad04a 45% 60%,#d03a3a 60% 100%)"></div></div></div>
<div class="lb" style="left:736px;top:906px">Videos</div>
<div class="F sd" style="left:935px;top:798px;background:linear-gradient(140deg,#5892f2 5%,#6b80ea 40%,#8868d6 70%,#9a5fd0 98%)"><svg class="tab" viewBox="0 0 100 100"><path d="M14.200 24.300C15 18 18 14 24 14H77.500C82.500 14 85.500 17 85.500 22V35.300H53C48 35.300 47 32 45.500 29 44 26 42.500 24.300 38.500 24.300Z" fill="#fff" fill-opacity="0.6"/></svg><svg class="tab" viewBox="0 0 100 100" fill="none" stroke="#34386f" stroke-width="5" stroke-linejoin="round" opacity=".92"><path d="M38.300 72.500V55.500a5 5 0 015-5h10.500l8.700 8.700V72.500"/><path d="M38.300 75v6.500h24.200V75" stroke-width="4.500" stroke-dasharray="2.200 2.200"/><path d="M53.500 51v8.500h8.500" stroke-width="3.500"/></svg></div>
<div class="lb" style="left:902px;top:906px">Vorlagen</div>
<div class="doc" style="left:1132px;top:824px"><svg style="position:absolute;left:0;top:0;width:34px;height:46px" viewBox="0 0 34 46"><path d="M3 4.5h12.1M3 6.8h18.8M3 9.1h13.8M3 11.4h13.9M3 13.7h10.0M3 16.0h17.8M3 18.3h25.3M3 20.6h14.0M3 22.9h23.4M3 25.2h10.1M3 27.5h20.3M3 29.8h14.6M3 32.1h16.1M3 34.4h16.1M3 36.7h20.7M3 39.0h16.7" stroke="#c2c2ce" stroke-width="0.7"/></svg></div>
<div class="lb h" style="left:1067px;top:906px">.bash_history</div>
<div class="doc" style="left:1298px;top:824px"><svg style="position:absolute;left:0;top:0;width:34px;height:46px" viewBox="0 0 34 46"><path d="M3 4.5h13.3M3 6.8h14.0M3 9.1h24.3M3 11.4h11.1M3 13.7h17.1M3 16.0h23.8M3 18.3h10.0M3 20.6h22.6M3 22.9h12.6M3 25.2h22.8M3 27.5h24.1M3 29.8h19.3M3 32.1h19.2M3 34.4h10.3M3 36.7h23.3M3 39.0h21.9M3 41.3h26.6" stroke="#c2c2ce" stroke-width="0.7"/></svg></div>
<div class="lb h" style="left:1233px;top:906px">.bash_history00</div>
<div class="doc" style="left:1464px;top:824px"><svg style="position:absolute;left:0;top:0;width:34px;height:46px" viewBox="0 0 34 46"><path d="M3 4.5h11.1M3 6.8h16.2" stroke="#c2c2ce" stroke-width="0.7"/></svg></div>
<div class="lb h" style="left:1399px;top:906px">.bash_logout</div>
<div class="doc" style="left:1630px;top:824px"><svg style="position:absolute;left:0;top:0;width:34px;height:46px" viewBox="0 0 34 46"><path d="M3 4.500h3M3 7h9M3 12.500h18" stroke="#c4c4d0" stroke-width=".6"/></svg></div>
<div class="lb h" style="left:1565px;top:906px">.bash_profile</div>
<div class="doc" style="left:1796px;top:824px"><svg style="position:absolute;left:0;top:0;width:34px;height:46px" viewBox="0 0 34 46"><path d="M3 4.500h3M3 7h8M3 12h28M3 14.500h14" stroke="#c0c0cc" stroke-width=".6"/><path d="M3 19.500h16M3 22h24M3 24.500h22M3 27h26M3 29.500h20M3 32h9M3 36.500h14" stroke="#e8a6b0" stroke-width=".7"/></svg></div>
<div class="lb h" style="left:1731px;top:906px">.bashrc</div>
<div class="doc" style="left:303px;top:968px"><svg style="position:absolute;left:0;top:0;width:34px;height:46px" viewBox="0 0 34 46"><path d="M3 4.5h20.6M3 6.8h22.5M3 9.1h17.6M3 11.4h22.5M3 13.7h22.4M3 16.0h20.3M3 18.3h23.5M3 20.6h23.4M3 22.9h13.0M3 25.2h15.6M3 27.5h26.1M3 29.8h25.3M3 32.1h23.9M3 34.4h21.7" stroke="#c2c2ce" stroke-width="0.7"/></svg></div>
<div class="doc" style="left:469px;top:968px"><svg style="position:absolute;left:0;top:0;width:34px;height:46px" viewBox="0 0 34 46"><path d="M3 4.5h20.3M3 6.8h21.4M3 9.1h20.5M3 11.4h24.6M3 13.7h10.1M3 16.0h26.3M3 18.3h20.6M3 20.6h14.4M3 22.9h14.5M3 25.2h16.4M3 27.5h24.2M3 29.8h13.2M3 32.1h16.5M3 34.4h16.5M3 36.7h18.8M3 39.0h17.5" stroke="#c2c2ce" stroke-width="0.7"/></svg></div>
<div class="doc" style="left:635px;top:968px"><svg style="position:absolute;left:0;top:0;width:34px;height:46px" viewBox="0 0 34 46"><path d="M3 4.5h10.1M3 6.8h20.6" stroke="#c2c2ce" stroke-width="0.7"/></svg></div>
<div class="doc" style="left:801px;top:968px"></div>
<div class="doc" style="left:967px;top:968px"><svg style="position:absolute;left:0;top:0;width:34px;height:46px" viewBox="0 0 34 46"><path d="M3 4.5h26.2M3 6.8h15.9M3 9.1h24.2M3 11.4h25.2M3 13.7h15.3M3 16.0h26.2M3 18.3h23.7M3 20.6h15.7M3 22.9h11.5M3 25.2h17.1M3 27.5h11.8M3 29.8h10.4M3 32.1h15.4M3 34.4h22.7" stroke="#c2c2ce" stroke-width="0.7"/></svg></div>
<div class="doc" style="left:1132px;top:968px"><svg style="position:absolute;left:0;top:0;width:34px;height:46px" viewBox="0 0 34 46"><path d="M3 4.5h19.4M3 6.8h16.3M3 9.1h23.1M3 11.4h11.3M3 13.7h18.0M3 16.0h20.0M3 18.3h11.8M3 20.6h23.3M3 22.9h12.6M3 25.2h15.0M3 27.5h12.9M3 29.8h25.4M3 32.1h12.0M3 34.4h24.6M3 36.7h21.6" stroke="#c2c2ce" stroke-width="0.7"/></svg></div>
<div class="doc" style="left:1298px;top:968px"><svg style="position:absolute;left:0;top:0;width:34px;height:46px" viewBox="0 0 34 46"><path d="M3 4.5h25.7" stroke="#c2c2ce" stroke-width="0.7"/></svg></div>
<div class="doc" style="left:1464px;top:968px"><svg style="position:absolute;left:0;top:0;width:34px;height:46px" viewBox="0 0 34 46"><path d="M3 4.5h16.9M3 6.8h10.1M3 9.1h20.7M3 11.4h12.4M3 13.7h11.8M3 16.0h15.2M3 18.3h10.5M3 20.6h12.0M3 22.9h12.4M3 25.2h10.9M3 27.5h19.9M3 29.8h15.4M3 32.1h13.0M3 34.4h17.2M3 36.7h26.0M3 39.0h14.0" stroke="#c2c2ce" stroke-width="0.7"/></svg></div>
<div class="doc" style="left:1630px;top:968px"><svg style="position:absolute;left:0;top:0;width:34px;height:46px" viewBox="0 0 34 46"><path d="M3 4.5h18.3M3 6.8h13.0M3 9.1h15.8M3 11.4h10.3M3 13.7h12.2M3 16.0h21.8M3 18.3h22.9M3 20.6h12.5M3 22.9h16.2M3 25.2h9.9M3 27.5h19.4M3 29.8h13.4M3 32.1h18.8M3 34.4h18.5" stroke="#c2c2ce" stroke-width="0.7"/></svg></div>
<div class="doc" style="left:1796px;top:968px"><svg style="position:absolute;left:0;top:0;width:34px;height:46px" viewBox="0 0 34 46"><path d="M3 4.5h15.7M3 6.8h18.7M3 9.1h21.2M3 11.4h20.0M3 13.7h16.7M3 16.0h20.2M3 18.3h24.8M3 20.6h12.1M3 22.9h20.4M3 25.2h15.3M3 27.5h26.3M3 29.8h10.3M3 32.1h16.5M3 34.4h17.8M3 36.7h14.3M3 39.0h13.6" stroke="#c2c2ce" stroke-width="0.7"/></svg></div>
<div style="position:absolute;left:1908px;top:66px;width:6px;height:747px;border-radius:3px;background:#c9b9e1;border:1px solid #a983c2"></div>
</div></div>
<div id="status"><span style="position:absolute;left:7px;top:5px;white-space:nowrap;letter-spacing:-.1px">55 Ordner, 16 Dateien (193,8 KiB)</span>
<span style="position:absolute;left:1221px;top:5px;white-space:nowrap">Vergrößerung:</span>
<div style="position:absolute;left:1320px;top:11px;width:135px;height:6px;border-radius:3px;background:#d2d6f2;border:1px solid #c4c8ec"></div>
<div style="position:absolute;left:1320px;top:11px;width:62px;height:6px;border-radius:3px;background:#c3a3d3"></div>
<div style="position:absolute;left:1371px;top:5px;width:18px;height:18px;border-radius:9px;background:#dcdef8;border:1px solid #aeb3e0"></div>
<div style="position:absolute;left:1461px;top:11px;width:88px;height:6px;border-radius:3px;background:#d2d6f2;border:1px solid #c4c8ec"></div>
<div style="position:absolute;left:1461px;top:11px;width:22px;height:6px;border-radius:3px;background:#c3a3d3"></div>
<span style="position:absolute;left:1565px;top:5px;white-space:nowrap">678,6 GiB frei</span>
<svg style="position:absolute;left:1664px;top:11px;width:12px;height:8px" viewBox="0 0 12 8"><path d="M1.500 1.700L6 6.200l4.500-4.500" fill="none" stroke="#2f3a9e" stroke-width="1.200" stroke-linecap="round" stroke-linejoin="round"/></svg>
</div>

<div id="panel">
<svg style="position:absolute;left:22px;top:9px;width:20px;height:20px" viewBox="0 0 20 20" fill="#fff"><rect x="1.500" y="1.500" width="3.600" height="3.600" rx="1"/><rect x="8.200" y="1.500" width="3.600" height="3.600" rx="1"/><rect x="14.900" y="1.500" width="3.600" height="3.600" rx="1"/><rect x="1.500" y="8.200" width="3.600" height="3.600" rx="1"/><rect x="8.200" y="8.200" width="3.600" height="3.600" rx="1"/><rect x="14.900" y="8.200" width="3.600" height="3.600" rx="1"/><rect x="1.500" y="14.900" width="3.600" height="3.600" rx="1"/><rect x="8.200" y="14.900" width="3.600" height="3.600" rx="1"/><rect x="14.900" y="14.900" width="3.600" height="3.600" rx="1"/></svg>
<div style="position:absolute;left:59px;top:18px;width:16px;height:2px;background:#fff;border-radius:1px"></div>
<div style="position:absolute;left:921px;top:-1px;width:36px;height:39px;background:#70487f;border-top:4px solid #9a62b2"></div>
<div style="position:absolute;left:959px;top:-1px;width:35px;height:39px;background:#6b6975;border-top:4px solid #9b9aa2"></div>
<svg style="position:absolute;left:890px;top:8px;width:22px;height:22px" viewBox="0 0 22 22"><rect x="1" y="1" width="20" height="20" rx="6" fill="#4a5686" stroke="#2a2c44" stroke-width="1"/><path d="M4.500 8h13" stroke="#58c0d8" stroke-width="1.400"/><path d="M4.500 14h13" stroke="#b8b0a8" stroke-width="1.400"/><path d="M4.500 14h5" stroke="#58c0d8" stroke-width="1.400"/><circle cx="15" cy="8" r="1.600" fill="#fff"/><circle cx="9.500" cy="14" r="1.600" fill="#fff"/></svg>
<svg style="position:absolute;left:928px;top:8px;width:22px;height:22px" viewBox="0 0 22 22"><defs><linearGradient id="dg" x1="0" y1="0" x2="0" y2="1"><stop offset="0" stop-color="#9362d4"/><stop offset="1" stop-color="#3c74d6"/></linearGradient></defs><rect x="1" y="1" width="20" height="20" rx="6.500" fill="url(#dg)"/><path d="M5.800 17.500c.8-1.200 1-2.500.9-4.200-.2-3.800 2.500-7.300 6.300-7.500 1-.6 1.800-.7 2.300-.500-.300.400-.400.800-.300 1.200 1.700.8 2.600 2 3 3.500-1.400-.9-2.900-1.200-4.300-.9-1.700.4-2.800 1.600-3.200 3.200.8.300 1.300.8 1.500 1.500-1-.3-1.900-.2-2.500.300.100.9-.100 1.700-.700 2.300-.200-.700-.600-1-1.200-1-1 .2-1.500.9-1.800 2.100z" fill="#fff"/></svg>
<svg style="position:absolute;left:966px;top:8px;width:22px;height:22px" viewBox="0 0 22 22"><rect x="1" y="1" width="20" height="20" rx="6" fill="#4b5b96"/><path d="M5 6.500l5 4.300-5 4.300" fill="none" stroke="#e4e4f0" stroke-width="1.700" stroke-linecap="round" stroke-linejoin="round"/><path d="M11 16h6.500" stroke="#e4e4f0" stroke-width="1.700" stroke-linecap="round"/></svg>
<svg style="position:absolute;left:1003px;top:8px;width:22px;height:22px" viewBox="0 0 22 22"><defs><linearGradient id="fg" x1="0" y1="0" x2="0" y2="1"><stop offset="0" stop-color="#e8864e"/><stop offset=".55" stop-color="#a87068"/><stop offset="1" stop-color="#5e5a88"/></linearGradient><radialGradient id="ff" cx=".5" cy=".35" r=".7"><stop offset="0" stop-color="#ffd23c"/><stop offset=".5" stop-color="#ff7a20"/><stop offset="1" stop-color="#ee2a6a"/></radialGradient></defs><rect x="1" y="1" width="20" height="20" rx="6.500" fill="url(#fg)" stroke="#2a2838" stroke-width="1"/><circle cx="11" cy="12" r="6.800" fill="url(#ff)"/><path d="M12.500 3.500c2.500 1.500 5 4 5 8" stroke="#ffd23c" stroke-width="2" fill="none"/><circle cx="10.500" cy="12" r="3.200" fill="#5a1ee0"/><path d="M5.500 6.500c1 .5 2 1.500 2.500 2.500l3 .5" stroke="#ff8a20" stroke-width="1.600" fill="none"/></svg>
<!-- tray -->
<svg style="position:absolute;left:1393px;top:9px;width:20px;height:20px" viewBox="0 0 20 20" fill="none" stroke="#fff" stroke-width="1.400" stroke-linecap="round" stroke-linejoin="round"><path d="M3 2.800l11 3.200"/><rect x="2.200" y="6" width="15.600" height="11" rx="2.500"/><circle cx="13.500" cy="12" r="2.300"/><circle cx="13.500" cy="12" r=".6" fill="#fff"/><path d="M4.800 9.500h4.500M4.800 12h4.500M4.800 14.500h4.500" stroke-width="1.200"/></svg>
<span style="position:absolute;left:1434px;top:9px;font-size:16.300px;line-height:20px;letter-spacing:-.2px;-webkit-text-stroke:.3px">2°</span>
<svg style="position:absolute;left:1461px;top:11px;width:16px;height:16px" viewBox="0 0 16 16"><path d="M8.700 1.600A6 6 0 1013.300 6.600 3.900 3.900 0 018.700 1.600z" fill="none" stroke="#fff" stroke-width="1.900" stroke-linejoin="round"/><path d="M9.200 2.200a3.600 3.600 0 003.700 4" stroke="#f0a64a" stroke-width="1" fill="none" opacity=".8"/></svg>
<svg style="position:absolute;left:1495px;top:10px;width:18px;height:18px" viewBox="0 0 18 18"><path d="M2.500 1.700H8L15 9H2.500z" fill="#d9d9dc"/><path d="M2.500 9L8.500 2.500" stroke="#fff" stroke-width="1.400"/><path d="M2.500 9l7-7.300L15.200 9z" fill="none"/><rect x="1.700" y="10.300" width="14.400" height="5.600" rx="1.300" fill="#fff"/><path d="M4.500 13.100h8.500" stroke="#3a3442" stroke-width="1.700"/></svg>
<svg style="position:absolute;left:1528px;top:9px;width:20px;height:20px" viewBox="0 0 20 20"><path d="M10 1.800c-4.800 0-8.500 3.500-8.500 8.200s3.500 8.300 7.500 8.300c1.500 0 2.200-.9 2.200-1.900 0-1.300-1-1.600-1-2.900 0-1 .9-1.800 2-1.800h2.300c2.300 0 4-1.500 4-3.700 0-3.600-3.700-6.200-8.500-6.200z" fill="#fff"/><circle cx="5.300" cy="10.500" r="1.400" fill="#302c3a"/><circle cx="7" cy="6.300" r="1.400" fill="#302c3a"/><circle cx="11.200" cy="4.800" r="1.400" fill="#302c3a"/><circle cx="15" cy="7.200" r="1.400" fill="#302c3a"/></svg>
<svg style="position:absolute;left:1565px;top:11px;width:16px;height:16px" viewBox="0 0 16 16"><path d="M1.500 14.500l1-2.800 6-6 1.800 1.800-6 6z" fill="#fff"/><path d="M8.200 4.300l3.500 3.500" stroke="#fff" stroke-width="1.800"/><path d="M10 5.800l2.200-2.600a1.400 1.400 0 012.100 2L11.700 7.500z" fill="#fff"/><path d="M3.800 12.200l4.500-4.500" stroke="#302c3a" stroke-width="1"/></svg>
<div style="position:absolute;left:1584px;top:13px;width:1px;height:12px;background:#d0d0d8"></div>
<div style="position:absolute;left:1591px;top:13px;width:12px;height:12px;border-radius:6px;background:#c3c4d4"></div>
<svg style="position:absolute;left:1622px;top:9px;width:20px;height:20px" viewBox="0 0 20 20"><path d="M10 2.500c-3 0-4.800 2.200-4.800 5v3.300L3.300 14.200v.8h13.400v-.8l-1.900-3.400V7.500c0-2.800-1.800-5-4.800-5z" fill="none" stroke="#fff" stroke-width="1.600" stroke-linejoin="round"/><path d="M8 16.500a2 2 0 004 0" fill="none" stroke="#fff" stroke-width="1.500"/><circle cx="15" cy="4.500" r="2.200" fill="#1fae6a"/></svg>
<svg style="position:absolute;left:1648px;top:9px;width:20px;height:20px" viewBox="0 0 20 20"><circle cx="10" cy="10" r="8.500" fill="none" stroke="#fff" stroke-width="1.300"/><path d="M5 4.500c1.500.5 2.500 1.500 2 3-.5 1.200-2 1.200-2.800 2-.7.800 0 2.500 1.200 3 1.300.5 1.500 2 1.200 3.300A8 8 0 015 4.500z" fill="#fff"/><path d="M11.500 2.200c-.3 1.200.5 2 1.700 2.300l1.500-1a8 8 0 00-3.200-1.300z" fill="#fff"/><rect x="10" y="9.500" width="7" height="6.500" rx="1" fill="#fff" stroke="#302c3a" stroke-width=".8"/><path d="M11.700 9.500V8a1.800 1.800 0 013.600 0v1.500" fill="none" stroke="#fff" stroke-width="1.300"/></svg>
<svg style="position:absolute;left:1675px;top:10px;width:20px;height:19px" viewBox="0 0 20 19"><path d="M1.800 8.800L17.200 2.300l-3 13-4.700-3.600-2.300 2.600-.6-4.600z" fill="none" stroke="#fff" stroke-width="1.500" stroke-linejoin="round"/><path d="M6.600 9.700l10.600-7.400" stroke="#fff" stroke-width="1.200"/><circle cx="14.700" cy="15.200" r="2.600" fill="#bdbdc8"/></svg>
<svg style="position:absolute;left:1701px;top:9px;width:18px;height:20px" viewBox="0 0 18 20"><rect x="2.500" y="4" width="13" height="14" rx="1" fill="none" stroke="#fff" stroke-width="1.500"/><rect x="5" y="1.800" width="8" height="4" fill="#fff"/><path d="M5.200 9.500h7.600M5.200 12.300h7.600M5.200 15h4.500" stroke="#fff" stroke-width="1.300"/></svg>
<svg style="position:absolute;left:1727px;top:9px;width:18px;height:20px" viewBox="0 0 18 20"><rect x="3.200" y="2" width="11.600" height="16" rx="1.500" fill="none" stroke="#fff" stroke-width="1.500"/><path d="M3.200 14.800h11.600" stroke="#fff" stroke-width="1.300"/><path d="M7 3.800h4" stroke="#fff" stroke-width="1"/></svg>
<svg style="position:absolute;left:1750px;top:9px;width:22px;height:20px" viewBox="0 0 22 20"><path d="M1.500 7.200h3.700L10.800 2.500v15L5.200 12.800H1.500z" fill="#d8d8e0" stroke="#fff" stroke-width="1" stroke-linejoin="round"/><path d="M13.500 6.800a4.500 4.500 0 010 6.400" fill="none" stroke="#fff" stroke-width="1.400" stroke-linecap="round"/><path d="M16 4.500a7.800 7.800 0 010 11" fill="none" stroke="#c8c8d0" stroke-width="1.300" stroke-linecap="round"/><path d="M18.500 2.800a10.500 10.500 0 010 14.400" fill="none" stroke="#9a9aa8" stroke-width="1.100" stroke-linecap="round"/></svg>
<svg style="position:absolute;left:1780px;top:12px;width:20px;height:14px" viewBox="0 0 20 14"><path d="M2.500 10.800L10 3.300l7.500 7.500" fill="none" stroke="#fff" stroke-width="1.700" stroke-linecap="round" stroke-linejoin="round"/></svg>
<span style="position:absolute;left:1816px;top:9px;font-size:16.300px;line-height:20px;letter-spacing:-.42px;-webkit-text-stroke:.3px">20:46</span>
<svg style="position:absolute;left:1872px;top:8px;width:23px;height:22px" viewBox="0 0 23 22"><defs><linearGradient id="pg" x1="0" y1="0" x2="0" y2="1"><stop offset="0" stop-color="#8458ee"/><stop offset="1" stop-color="#6a48d0"/></linearGradient></defs><rect x=".5" y=".5" width="22" height="21" rx="7" fill="url(#pg)"/><circle cx="11.500" cy="11" r="6.500" fill="none" stroke="#e8dcff" stroke-width="1.700"/><path d="M8.800 13.700l5-5M10.200 8.300h4v4" fill="none" stroke="#fff" stroke-width="1.800"/></svg>
</div>

</body></html>
